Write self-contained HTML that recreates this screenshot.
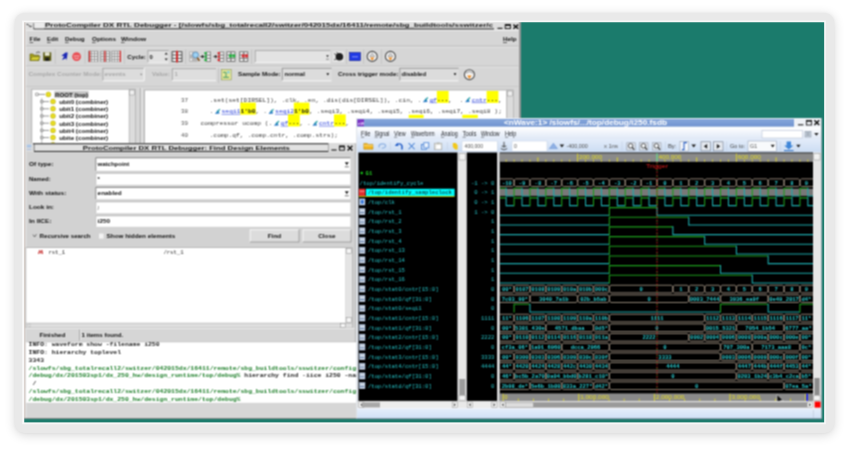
<!DOCTYPE html>
<html lang="en">
<head>
<meta charset="utf-8">
<title>ProtoCompiler DX RTL Debugger</title>
<style>
html,body{margin:0;padding:0;background:#fff;}
body{width:850px;height:453px;overflow:hidden;position:relative;font-family:"Liberation Sans",sans-serif;}
.card{position:absolute;left:15px;top:13px;width:819px;height:419.5px;background:#e9e9e9;border-radius:9px;
  box-shadow:0 2px 11px rgba(0,0,0,.16),0 0 3px rgba(0,0,0,.05);}
svg{position:absolute;left:0;top:0;}
svg text{white-space:pre;}
.s{font-family:"Liberation Sans",sans-serif;}
.m{font-family:"Liberation Mono",monospace;}
</style>
</head>
<body>
<div class="card"></div>
<svg width="850" height="453" viewBox="0 0 850 453">
<defs>
<filter id="soft" x="0" y="0" width="850" height="453" filterUnits="userSpaceOnUse" color-interpolation-filters="sRGB"><feConvolveMatrix order="3" kernelMatrix="1 2 1 2 4 2 1 2 1" divisor="16" edgeMode="duplicate"/></filter>
<clipPath id="shot"><rect x="24" y="22" width="800.2" height="400.6"/></clipPath>
<clipPath id="mainclip"><rect x="24" y="22" width="497.1" height="396.9"/></clipPath>
<clipPath id="waveclip"><rect x="499.7" y="152.5" width="313.3" height="248.5"/></clipPath>
<linearGradient id="gmenu" x1="0" y1="0" x2="0" y2="1"><stop offset="0" stop-color="#ffffff"/><stop offset="1" stop-color="#dfe8f6"/></linearGradient>
<linearGradient id="gtool" x1="0" y1="0" x2="0" y2="1"><stop offset="0" stop-color="#e3ecf9"/><stop offset="1" stop-color="#cbdcf3"/></linearGradient>
<linearGradient id="gstat" x1="0" y1="0" x2="0" y2="1"><stop offset="0" stop-color="#e6eefa"/><stop offset="1" stop-color="#cfdff5"/></linearGradient>
<linearGradient id="gtitle" x1="0" y1="0" x2="0" y2="1"><stop offset="0" stop-color="#86a6db"/><stop offset="1" stop-color="#6f93cf"/></linearGradient>
</defs>
<rect x="22.2" y="20.6" width="803.6" height="403.6" fill="#f8f8f8"/>
<g clip-path="url(#shot)" filter="url(#soft)">
<rect x="24" y="22" width="801" height="401" fill="#1b7b6c"/>
<g clip-path="url(#mainclip)">
<rect x="24" y="22" width="497.1" height="396.9" fill="#d6d6d6"/>
<rect x="24" y="22" width="0.9" height="396.9" fill="#c2b2a6"/>
<rect x="24.9" y="22" width="1.7" height="396.9" fill="#e0e0e0"/>
<rect x="519" y="22" width="2.1" height="396.9" fill="#969696"/>
<rect x="26" y="22" width="492.4" height="8.3" fill="#dedede"/>
<path d="M26.6 24.4 q1.6 -0.4 2.4 1.2 q1 1.8 2.8 0.6" stroke="#222" fill="none" stroke-width="0.9"/>
<line x1="33.8" y1="23" x2="33.8" y2="29.2" stroke="#444" stroke-width="0.7"/>
<line x1="33.8" y1="28.9" x2="494" y2="28.9" stroke="#111" stroke-width="0.9"/>
<rect x="34.4" y="23" width="9.6" height="5.4" fill="#ececec"/>
<text class="s" x="45" y="27.1" font-size="5.7" fill="#111" textLength="448" lengthAdjust="spacingAndGlyphs" font-weight="bold">ProtoCompiler DX RTL Debugger - [/slowfs/sbg_totalrecall2/switzer/042015dx/16411/remote/sbg_buildtools/sswitzer/c</text>
<line x1="497.5" y1="28.3" x2="502.5" y2="28.3" stroke="#111" stroke-width="1.1"/>
<rect x="505.2" y="24.6" width="5.2" height="4" fill="none" stroke="#111" stroke-width="0.9"/>
<line x1="505.2" y1="25.2" x2="510.4" y2="25.2" stroke="#111" stroke-width="1.4"/>
<path d="M513.4 24.6 L518.2 28.8 M518.2 24.6 L513.4 28.8" stroke="#111" fill="none" stroke-width="1.4"/>
<line x1="26" y1="30.6" x2="518.4" y2="30.6" stroke="#f6f6f6" stroke-width="0.7"/>
<text class="s" x="29.6" y="41.3" font-size="6.07" fill="#111" textLength="10.9" lengthAdjust="spacingAndGlyphs" font-weight="bold">File</text>
<line x1="29.6" y1="42.6" x2="33.2" y2="42.6" stroke="#111" stroke-width="0.6"/>
<text class="s" x="47" y="41.3" font-size="6.07" fill="#111" textLength="11.2" lengthAdjust="spacingAndGlyphs" font-weight="bold">Edit</text>
<line x1="47" y1="42.6" x2="50.6" y2="42.6" stroke="#111" stroke-width="0.6"/>
<text class="s" x="65" y="41.3" font-size="6.07" fill="#111" textLength="19.6" lengthAdjust="spacingAndGlyphs" font-weight="bold">Debug</text>
<line x1="65" y1="42.6" x2="68.6" y2="42.6" stroke="#111" stroke-width="0.6"/>
<text class="s" x="92" y="41.3" font-size="6.07" fill="#111" textLength="24" lengthAdjust="spacingAndGlyphs" font-weight="bold">Options</text>
<line x1="92" y1="42.6" x2="95.6" y2="42.6" stroke="#111" stroke-width="0.6"/>
<text class="s" x="121" y="41.3" font-size="6.07" fill="#111" textLength="25" lengthAdjust="spacingAndGlyphs" font-weight="bold">Window</text>
<line x1="121" y1="42.6" x2="124.6" y2="42.6" stroke="#111" stroke-width="0.6"/>
<text class="s" x="503" y="41.3" font-size="6.07" fill="#111" textLength="13.5" lengthAdjust="spacingAndGlyphs" font-weight="bold">Help</text>
<line x1="503" y1="42.6" x2="507" y2="42.6" stroke="#111" stroke-width="0.6"/>
<line x1="26" y1="46.2" x2="518.4" y2="46.2" stroke="#a8a8a8" stroke-width="0.8"/>
<line x1="26" y1="47" x2="518.4" y2="47" stroke="#f0f0f0" stroke-width="0.7"/>
<path d="M30 60.5 V54 h3 l1 1.2 h5 V60.5 Z" stroke="#5a5710" fill="#a8a21c" stroke-width="0.6"/>
<path d="M30 60.5 l2.2 -4 h8 l-2 4 Z" stroke="#5a5710" fill="#d0ca34" stroke-width="0.5"/>
<path d="M36 53 q2 -2 4 -0.5" stroke="#333" fill="none" stroke-width="0.7"/>
<rect x="43.2" y="52.3" width="8" height="8.5" fill="#5b5a12"/>
<rect x="44.8" y="52.3" width="4.8" height="3.5" fill="#e9e9d8"/>
<rect x="45.2" y="57.6" width="4" height="3.2" fill="#1c1c1c"/>
<line x1="55.3" y1="49.5" x2="55.3" y2="64" stroke="#bdbdbd" stroke-width="0.7"/>
<path d="M65.6 52.6 l-4.2 3.2 2.8 0.5 -2.3 3.7 4.2 -1.8 0.5 2.3 1.1 -7.9 Z" stroke="none" fill="#1c28b4" stroke-width="1"/>
<circle cx="76.6" cy="56.6" r="4.4" fill="#e84a50" stroke="none" stroke-width="1"/>
<path d="M73.6 56 h6 M74.4 58 q2.2 1.6 4.4 0" stroke="#f7d0d0" fill="none" stroke-width="0.9"/>
<line x1="85" y1="49.5" x2="85" y2="64" stroke="#bdbdbd" stroke-width="0.7"/>
<rect x="88.2" y="50.8" width="10" height="11.2" fill="#8c8c8c"/>
<rect x="89.1" y="51.6" width="2.23" height="1.8" fill="#f6f6f6"/>
<rect x="92.03" y="51.6" width="2.23" height="1.8" fill="#f6f6f6"/>
<rect x="94.97" y="51.6" width="2.23" height="1.8" fill="#f6f6f6"/>
<rect x="89.1" y="54.3" width="2.23" height="1.8" fill="#f6f6f6"/>
<rect x="92.03" y="54.3" width="2.23" height="1.8" fill="#f6f6f6"/>
<rect x="94.97" y="54.3" width="2.23" height="1.8" fill="#f6f6f6"/>
<rect x="89.1" y="57" width="2.23" height="1.8" fill="#f6f6f6"/>
<rect x="92.03" y="57" width="2.23" height="1.8" fill="#f6f6f6"/>
<rect x="94.97" y="57" width="2.23" height="1.8" fill="#f6f6f6"/>
<rect x="89.1" y="59.7" width="2.23" height="1.8" fill="#f6f6f6"/>
<rect x="92.03" y="59.7" width="2.23" height="1.8" fill="#f6f6f6"/>
<rect x="94.97" y="59.7" width="2.23" height="1.8" fill="#f6f6f6"/>
<line x1="89.6" y1="50.8" x2="89.6" y2="62" stroke="#d62828" stroke-width="1.3"/>
<rect x="100.4" y="50.8" width="9.6" height="11.2" fill="#8c8c8c"/>
<rect x="101.3" y="51.6" width="2.1" height="1.8" fill="#f6f6f6"/>
<rect x="104.1" y="51.6" width="2.1" height="1.8" fill="#f6f6f6"/>
<rect x="106.9" y="51.6" width="2.1" height="1.8" fill="#f6f6f6"/>
<rect x="101.3" y="54.3" width="2.1" height="1.8" fill="#f6f6f6"/>
<rect x="104.1" y="54.3" width="2.1" height="1.8" fill="#f6f6f6"/>
<rect x="106.9" y="54.3" width="2.1" height="1.8" fill="#f6f6f6"/>
<rect x="101.3" y="57" width="2.1" height="1.8" fill="#f6f6f6"/>
<rect x="104.1" y="57" width="2.1" height="1.8" fill="#f6f6f6"/>
<rect x="106.9" y="57" width="2.1" height="1.8" fill="#f6f6f6"/>
<rect x="101.3" y="59.7" width="2.1" height="1.8" fill="#f6f6f6"/>
<rect x="104.1" y="59.7" width="2.1" height="1.8" fill="#f6f6f6"/>
<rect x="106.9" y="59.7" width="2.1" height="1.8" fill="#f6f6f6"/>
<line x1="104.9" y1="50.8" x2="104.9" y2="62" stroke="#d62828" stroke-width="1.3"/>
<rect x="111.4" y="50.8" width="9.6" height="11.2" fill="#8c8c8c"/>
<rect x="112.3" y="51.6" width="2.1" height="1.8" fill="#f6f6f6"/>
<rect x="115.1" y="51.6" width="2.1" height="1.8" fill="#f6f6f6"/>
<rect x="117.9" y="51.6" width="2.1" height="1.8" fill="#f6f6f6"/>
<rect x="112.3" y="54.3" width="2.1" height="1.8" fill="#f6f6f6"/>
<rect x="115.1" y="54.3" width="2.1" height="1.8" fill="#f6f6f6"/>
<rect x="117.9" y="54.3" width="2.1" height="1.8" fill="#f6f6f6"/>
<rect x="112.3" y="57" width="2.1" height="1.8" fill="#f6f6f6"/>
<rect x="115.1" y="57" width="2.1" height="1.8" fill="#f6f6f6"/>
<rect x="117.9" y="57" width="2.1" height="1.8" fill="#f6f6f6"/>
<rect x="112.3" y="59.7" width="2.1" height="1.8" fill="#f6f6f6"/>
<rect x="115.1" y="59.7" width="2.1" height="1.8" fill="#f6f6f6"/>
<rect x="117.9" y="59.7" width="2.1" height="1.8" fill="#f6f6f6"/>
<line x1="120.3" y1="50.8" x2="120.3" y2="62" stroke="#d62828" stroke-width="1.3"/>
<line x1="124.4" y1="49.5" x2="124.4" y2="64" stroke="#bdbdbd" stroke-width="0.7"/>
<text class="s" x="127.3" y="58.6" font-size="6.07" fill="#111" textLength="18.6" lengthAdjust="spacingAndGlyphs" font-weight="bold">Cycle:</text>
<rect x="147.6" y="50.6" width="21" height="12" fill="#e2e2e2"/>
<line x1="147.6" y1="50.6" x2="168.6" y2="50.6" stroke="#9a9a9a" stroke-width="0.8"/>
<line x1="147.9" y1="50.6" x2="147.9" y2="62.6" stroke="#9a9a9a" stroke-width="0.8"/>
<line x1="147.6" y1="62.8" x2="168.6" y2="62.8" stroke="#f8f8f8" stroke-width="0.8"/>
<text class="s" x="149.6" y="58.8" font-size="5.89" fill="#111" font-weight="bold">0</text>
<path d="M164.6 54.6 l1.6 -2 1.6 2 Z M164.6 58.4 l1.6 2 1.6 -2 Z" stroke="none" fill="#222" stroke-width="1"/>
<rect x="171.6" y="51.2" width="10.8" height="10.8" fill="#4c4c4c"/>
<rect x="172.6" y="52.2" width="3.6" height="2.3" fill="#f4f4f4"/>
<rect x="177.8" y="52.2" width="3.6" height="2.3" fill="#f4f4f4"/>
<rect x="172.6" y="55.5" width="3.6" height="2.3" fill="#f4f4f4"/>
<rect x="177.8" y="55.5" width="3.6" height="2.3" fill="#f4f4f4"/>
<rect x="172.6" y="58.8" width="3.6" height="2.3" fill="#f4f4f4"/>
<rect x="177.8" y="58.8" width="3.6" height="2.3" fill="#f4f4f4"/>
<line x1="177" y1="50.8" x2="177" y2="62.4" stroke="#e02424" stroke-width="1.7"/>
<line x1="185.6" y1="49.5" x2="185.6" y2="64" stroke="#bdbdbd" stroke-width="0.7"/>
<rect x="189.2" y="51.4" width="8.4" height="10.4" fill="#b4b4b4"/>
<rect x="190.2" y="58.6" width="1.8" height="2" fill="#f4f4f4"/>
<rect x="190.2" y="52.4" width="1.8" height="2" fill="#f4f4f4"/>
<circle cx="195.6" cy="55" r="2.9" fill="#9cd2f4" stroke="#4f7fae" stroke-width="0.7"/>
<line x1="197.4" y1="57.6" x2="199.4" y2="60.8" stroke="#7a4a16" stroke-width="1.6"/>
<path d="M200.4 56.6 h3.4 M202 55.2 l1.6 1.4 -1.6 1.4" stroke="#1a1a1a" fill="none" stroke-width="1"/>
<rect x="206.2" y="51.6" width="4.8" height="10.2" fill="#7c7c7c"/>
<rect x="207" y="52.5" width="3.2" height="2" fill="#f4f4f4"/>
<rect x="207" y="55.7" width="3.2" height="2" fill="#f4f4f4"/>
<rect x="207" y="58.9" width="3.2" height="2" fill="#f4f4f4"/>
<line x1="205.6" y1="52" x2="205.6" y2="61.4" stroke="#5a5a5a" stroke-width="0.7"/>
<rect x="204.4" y="52.1" width="2.4" height="2.2" fill="#1eb43c"/>
<rect x="204.4" y="55.5" width="2.4" height="2.2" fill="#1eb43c"/>
<rect x="204.4" y="58.9" width="2.4" height="2.2" fill="#1eb43c"/>
<path d="M213.6 56.6 h3.4 M215.2 55.2 l1.6 1.4 -1.6 1.4" stroke="#1a1a1a" fill="none" stroke-width="1"/>
<rect x="219.4" y="51.6" width="4.8" height="10.2" fill="#7c7c7c"/>
<rect x="220.2" y="52.5" width="3.2" height="2" fill="#f4f4f4"/>
<rect x="220.2" y="55.7" width="3.2" height="2" fill="#f4f4f4"/>
<rect x="220.2" y="58.9" width="3.2" height="2" fill="#f4f4f4"/>
<line x1="218.8" y1="52" x2="218.8" y2="61.4" stroke="#5a5a5a" stroke-width="0.7"/>
<rect x="217.6" y="52.1" width="2.4" height="2.2" fill="#dc2c30"/>
<rect x="217.6" y="55.5" width="2.4" height="2.2" fill="#dc2c30"/>
<rect x="217.6" y="58.9" width="2.4" height="2.2" fill="#dc2c30"/>
<rect x="226.4" y="51.4" width="9" height="10.4" fill="#6c6c6c"/>
<rect x="227.3" y="52.3" width="3" height="2.2" fill="#f2f2f2"/>
<rect x="231.5" y="52.3" width="3" height="2.2" fill="#f2f2f2"/>
<rect x="227.3" y="55.5" width="3" height="2.2" fill="#f2f2f2"/>
<rect x="231.5" y="55.5" width="3" height="2.2" fill="#f2f2f2"/>
<rect x="227.3" y="58.7" width="3" height="2.2" fill="#f2f2f2"/>
<rect x="231.5" y="58.7" width="3" height="2.2" fill="#f2f2f2"/>
<rect x="229" y="54.4" width="2.8" height="3" fill="#1eb43c"/>
<rect x="232.4" y="54.4" width="2.8" height="3" fill="#1eb43c"/>
<rect x="239.2" y="51.4" width="9" height="10.4" fill="#6c6c6c"/>
<rect x="240.1" y="52.3" width="3" height="2.2" fill="#f2f2f2"/>
<rect x="244.3" y="52.3" width="3" height="2.2" fill="#f2f2f2"/>
<rect x="240.1" y="55.5" width="3" height="2.2" fill="#f2f2f2"/>
<rect x="244.3" y="55.5" width="3" height="2.2" fill="#f2f2f2"/>
<rect x="240.1" y="58.7" width="3" height="2.2" fill="#f2f2f2"/>
<rect x="244.3" y="58.7" width="3" height="2.2" fill="#f2f2f2"/>
<rect x="241.8" y="54.4" width="2.8" height="3" fill="#dc2c30"/>
<rect x="245.2" y="54.4" width="2.8" height="3" fill="#dc2c30"/>
<line x1="251.6" y1="49.5" x2="251.6" y2="64" stroke="#bdbdbd" stroke-width="0.7"/>
<rect x="255" y="50.4" width="75.4" height="12" fill="#e3e3e3"/>
<line x1="255" y1="50.6" x2="330.4" y2="50.6" stroke="#a0a0a0" stroke-width="0.8"/>
<line x1="255.3" y1="50.4" x2="255.3" y2="62.4" stroke="#a0a0a0" stroke-width="0.8"/>
<line x1="255" y1="62.6" x2="330.4" y2="62.6" stroke="#f8f8f8" stroke-width="0.9"/>
<path d="M326.2 55.2 h2.6 l-1.3 2 Z" stroke="none" fill="#222" stroke-width="1"/>
<line x1="326" y1="59.2" x2="329" y2="59.2" stroke="#555" stroke-width="0.6"/>
<rect x="332.6" y="51.4" width="11.4" height="10.6" fill="#e6e6e6"/>
<circle cx="339.4" cy="56.8" r="3.8" fill="#1e1e1e" stroke="none" stroke-width="1"/>
<path d="M334 53.5 l3 2 M334 60 l3 -1.5 M336.5 52 l1.6 2" stroke="#333" fill="none" stroke-width="0.8"/>
<line x1="346.6" y1="49.5" x2="346.6" y2="64" stroke="#bdbdbd" stroke-width="0.7"/>
<rect x="349.6" y="52.6" width="10.8" height="8" fill="#1f38e4" stroke="#0e1a8a" stroke-width="0.6"/>
<line x1="352" y1="56.8" x2="358" y2="56.8" stroke="#aab6ff" stroke-width="0.8"/>
<line x1="363.6" y1="49.5" x2="363.6" y2="64" stroke="#bdbdbd" stroke-width="0.7"/>
<circle cx="372.2" cy="56.4" r="5" fill="#f4f4f4" stroke="#4a4a4a" stroke-width="1.1"/>
<path d="M372.2 53 l2.6 3.4 h-5.2 Z" stroke="#777" fill="#d8d8d8" stroke-width="0.5"/>
<path d="M370 57.4 h4.4 l-2.2 3.2 Z" stroke="none" fill="#f08a1c" stroke-width="1"/>
<circle cx="390.4" cy="56.4" r="5" fill="#f4f4f4" stroke="#4a4a4a" stroke-width="1.1"/>
<path d="M390.4 53 l2.6 3.4 h-5.2 Z" stroke="#777" fill="#d8d8d8" stroke-width="0.5"/>
<path d="M388.2 57.4 h4.4 l-2.2 3.2 Z" stroke="none" fill="#f08a1c" stroke-width="1"/>
<line x1="381.4" y1="49.5" x2="381.4" y2="64" stroke="#bdbdbd" stroke-width="0.7"/>
<line x1="26" y1="66.2" x2="518.4" y2="66.2" stroke="#b4b4b4" stroke-width="0.8"/>
<line x1="26" y1="67" x2="518.4" y2="67" stroke="#efefef" stroke-width="0.7"/>
<g transform="translate(0 -0.9)">
<text class="s" x="28.5" y="77" font-size="5.98" fill="#a9a9a9" textLength="73.5" lengthAdjust="spacingAndGlyphs" font-weight="bold">Complex Counter Mode:</text>
<rect x="102.6" y="69" width="41.4" height="12.6" fill="#dcdcdc"/>
<line x1="102.6" y1="69.2" x2="144" y2="69.2" stroke="#9c9c9c" stroke-width="0.8"/>
<line x1="102.9" y1="69" x2="102.9" y2="81.6" stroke="#9c9c9c" stroke-width="0.8"/>
<line x1="102.6" y1="81.8" x2="144" y2="81.8" stroke="#fafafa" stroke-width="0.9"/>
<line x1="144.2" y1="69" x2="144.2" y2="81.8" stroke="#fafafa" stroke-width="0.9"/>
<text class="s" x="104.6" y="77" font-size="5.89" fill="#a9a9a9" textLength="21" lengthAdjust="spacingAndGlyphs" font-weight="bold">events</text>
<path d="M140 74.6 h2.4 l-1.2 1.8 Z" stroke="none" fill="#888" stroke-width="1"/>
<text class="s" x="152" y="77" font-size="5.98" fill="#a9a9a9" textLength="18" lengthAdjust="spacingAndGlyphs" font-weight="bold">Value:</text>
<rect x="172" y="69.4" width="44" height="12" fill="#dedede"/>
<line x1="172" y1="69.6" x2="216" y2="69.6" stroke="#9c9c9c" stroke-width="0.8"/>
<line x1="172.3" y1="69.4" x2="172.3" y2="81.4" stroke="#9c9c9c" stroke-width="0.8"/>
<line x1="172" y1="81.6" x2="216" y2="81.6" stroke="#fafafa" stroke-width="0.9"/>
<text class="s" x="174.4" y="77" font-size="5.89" fill="#a9a9a9" font-weight="bold">1</text>
<line x1="218.6" y1="68.6" x2="218.6" y2="84" stroke="#bdbdbd" stroke-width="0.7"/>
<rect x="221.4" y="70.4" width="9.8" height="10.4" fill="#e4e696" stroke="#8f9a62" stroke-width="0.6"/>
<path d="M223 73.2 h3 v5 h3 M223 78.2 h3" stroke="#4a9a6a" fill="none" stroke-width="1"/>
<rect x="227" y="71.8" width="2.8" height="2.6" fill="#8fd0d0"/>
<text class="s" x="238" y="77" font-size="5.98" fill="#111" textLength="42.6" lengthAdjust="spacingAndGlyphs" font-weight="bold">Sample Mode:</text>
<rect x="282" y="69" width="49.6" height="12.6" fill="#dcdcdc"/>
<line x1="282" y1="69.2" x2="331.6" y2="69.2" stroke="#8c8c8c" stroke-width="0.8"/>
<line x1="282.3" y1="69" x2="282.3" y2="81.6" stroke="#8c8c8c" stroke-width="0.8"/>
<line x1="282" y1="81.8" x2="331.6" y2="81.8" stroke="#fafafa" stroke-width="0.9"/>
<text class="s" x="284.4" y="77" font-size="5.89" fill="#111" textLength="20.6" lengthAdjust="spacingAndGlyphs" font-weight="bold">normal</text>
<path d="M326.4 74.2 h2.8 l-1.4 2.2 Z" stroke="none" fill="#111" stroke-width="1"/>
<text class="s" x="338" y="77" font-size="5.98" fill="#111" textLength="60.6" lengthAdjust="spacingAndGlyphs" font-weight="bold">Cross trigger mode:</text>
<rect x="399.6" y="69" width="59" height="12.6" fill="#dcdcdc"/>
<line x1="399.6" y1="69.2" x2="458.6" y2="69.2" stroke="#8c8c8c" stroke-width="0.8"/>
<line x1="399.9" y1="69" x2="399.9" y2="81.6" stroke="#8c8c8c" stroke-width="0.8"/>
<line x1="399.6" y1="81.8" x2="458.6" y2="81.8" stroke="#fafafa" stroke-width="0.9"/>
<text class="s" x="401.6" y="77" font-size="5.89" fill="#111" textLength="24.6" lengthAdjust="spacingAndGlyphs" font-weight="bold">disabled</text>
<path d="M453.6 74.2 h2.8 l-1.4 2.2 Z" stroke="none" fill="#111" stroke-width="1"/>
<circle cx="469.4" cy="75.6" r="5" fill="#f4f4f4" stroke="#4a4a4a" stroke-width="1.1"/>
<path d="M466 74 q3.4 -3 6.8 0" stroke="#777" fill="none" stroke-width="0.7"/>
<path d="M467.2 76.4 h4.4 l-2.2 3.4 Z" stroke="none" fill="#f08a1c" stroke-width="1"/>
</g>
<line x1="26" y1="86.4" x2="518.4" y2="86.4" stroke="#c4c4c4" stroke-width="0.7"/>
<rect x="31.4" y="88.8" width="104.4" height="54.7" fill="#a9a9a9"/>
<rect x="32.2" y="89.6" width="96.8" height="53.9" fill="#ffffff"/>
<rect x="129" y="89.6" width="6.2" height="53.9" fill="#dcdcdc"/>
<rect x="129.6" y="90" width="5" height="5" fill="#efefef" stroke="#8c8c8c" stroke-width="0.5"/>
<line x1="129.2" y1="89.6" x2="129.2" y2="143.5" stroke="#a4a4a4" stroke-width="0.6"/>
<rect x="54.4" y="91" width="34.2" height="6.8" fill="#c6c6c6"/>
<path d="M35.6 93.1 h2.6 v2.6 h-2.6 Z" stroke="#555" fill="none" stroke-width="0.5"/>
<line x1="38.2" y1="94.4" x2="45" y2="94.4" stroke="#555" stroke-width="0.6"/>
<circle cx="48.4" cy="94.4" r="2.5" fill="#e6dc22" stroke="#a89c10" stroke-width="0.4"/>
<text class="s" x="55" y="96.7" font-size="5.89" fill="#111" textLength="33" lengthAdjust="spacingAndGlyphs" font-weight="bold">ROOT (top)</text>
<path d="M40.6 100.4 h2.4 v2.4 h-2.4 Z" stroke="#555" fill="none" stroke-width="0.5"/>
<line x1="43" y1="101.6" x2="49" y2="101.6" stroke="#555" stroke-width="0.6"/>
<circle cx="53" cy="101.6" r="2.5" fill="#e6dc22" stroke="#a89c10" stroke-width="0.4"/>
<text class="s" x="59.2" y="103.9" font-size="5.7" fill="#111" textLength="49" lengthAdjust="spacingAndGlyphs" font-weight="bold">ubit0 (combiner)</text>
<path d="M40.6 107.6 h2.4 v2.4 h-2.4 Z" stroke="#555" fill="none" stroke-width="0.5"/>
<line x1="43" y1="108.8" x2="49" y2="108.8" stroke="#555" stroke-width="0.6"/>
<circle cx="53" cy="108.8" r="2.5" fill="#e6dc22" stroke="#a89c10" stroke-width="0.4"/>
<text class="s" x="59.2" y="111.1" font-size="5.7" fill="#111" textLength="49" lengthAdjust="spacingAndGlyphs" font-weight="bold">ubit1 (combiner)</text>
<path d="M40.6 114.8 h2.4 v2.4 h-2.4 Z" stroke="#555" fill="none" stroke-width="0.5"/>
<line x1="43" y1="116" x2="49" y2="116" stroke="#555" stroke-width="0.6"/>
<circle cx="53" cy="116" r="2.5" fill="#e6dc22" stroke="#a89c10" stroke-width="0.4"/>
<text class="s" x="59.2" y="118.3" font-size="5.7" fill="#111" textLength="49" lengthAdjust="spacingAndGlyphs" font-weight="bold">ubit2 (combiner)</text>
<path d="M40.6 122 h2.4 v2.4 h-2.4 Z" stroke="#555" fill="none" stroke-width="0.5"/>
<line x1="43" y1="123.2" x2="49" y2="123.2" stroke="#555" stroke-width="0.6"/>
<circle cx="53" cy="123.2" r="2.5" fill="#e6dc22" stroke="#a89c10" stroke-width="0.4"/>
<text class="s" x="59.2" y="125.5" font-size="5.7" fill="#111" textLength="49" lengthAdjust="spacingAndGlyphs" font-weight="bold">ubit3 (combiner)</text>
<path d="M40.6 129.2 h2.4 v2.4 h-2.4 Z" stroke="#555" fill="none" stroke-width="0.5"/>
<line x1="43" y1="130.4" x2="49" y2="130.4" stroke="#555" stroke-width="0.6"/>
<circle cx="53" cy="130.4" r="2.5" fill="#e6dc22" stroke="#a89c10" stroke-width="0.4"/>
<text class="s" x="59.2" y="132.7" font-size="5.7" fill="#111" textLength="49" lengthAdjust="spacingAndGlyphs" font-weight="bold">ubit4 (combiner)</text>
<path d="M40.6 136.4 h2.4 v2.4 h-2.4 Z" stroke="#555" fill="none" stroke-width="0.5"/>
<line x1="43" y1="137.6" x2="49" y2="137.6" stroke="#555" stroke-width="0.6"/>
<circle cx="53" cy="137.6" r="2.5" fill="#e6dc22" stroke="#a89c10" stroke-width="0.4"/>
<text class="s" x="59.2" y="139.9" font-size="5.7" fill="#111" textLength="49" lengthAdjust="spacingAndGlyphs" font-weight="bold">ubite (combiner)</text>
<path d="M40.6 143.6 h2.4 v2.4 h-2.4 Z" stroke="#555" fill="none" stroke-width="0.5"/>
<line x1="43" y1="144.8" x2="49" y2="144.8" stroke="#555" stroke-width="0.6"/>
<circle cx="53" cy="144.8" r="2.5" fill="#e6dc22" stroke="#a89c10" stroke-width="0.4"/>
<text class="s" x="59.2" y="147.1" font-size="5.7" fill="#111" textLength="49" lengthAdjust="spacingAndGlyphs" font-weight="bold">ubitd (combiner)</text>
<line x1="41.8" y1="98" x2="41.8" y2="143.5" stroke="#777" stroke-width="0.5"/>
<line x1="140.4" y1="88" x2="140.4" y2="143.5" stroke="#a2a2a2" stroke-width="0.9"/>
<line x1="141.4" y1="88" x2="141.4" y2="143.5" stroke="#f2f2f2" stroke-width="0.8"/>
<rect x="144.2" y="89.6" width="369.4" height="53.9" fill="#a9a9a9"/>
<rect x="145" y="90.4" width="361.6" height="53.1" fill="#ffffff"/>
<rect x="506.6" y="90.4" width="6.4" height="53.1" fill="#dcdcdc"/>
<line x1="506.8" y1="90.4" x2="506.8" y2="143.5" stroke="#a4a4a4" stroke-width="0.6"/>
<rect x="507.4" y="91" width="5" height="5" fill="#efefef" stroke="#8c8c8c" stroke-width="0.5"/>
<text class="m" x="188" y="101.7" font-size="5.9" fill="#555" text-anchor="end">37</text>
<text class="m" x="209.6" y="101.7" font-size="5.8" fill="#3a3a3a" textLength="211.68" lengthAdjust="spacingAndGlyphs">.set(set[DIRSEL]), .clk, .en, .dis(dis[DIRSEL]), .cin, .</text>
<path d="M422.88 102.3 l3.2 -4.4 1.4 4 Z" stroke="none" fill="#2a78c8" stroke-width="1"/>
<path d="M424.88 100.7 l3 -3.2" stroke="#2aa3a3" fill="none" stroke-width="1.1"/>
<text class="m" x="429.48" y="101.7" font-size="5.8" fill="#2038d8" textLength="7.56" lengthAdjust="spacingAndGlyphs">qf</text>
<line x1="429.48" y1="102.7" x2="437.04" y2="102.7" stroke="#2038d8" stroke-width="0.5"/>
<rect x="436.84" y="90.9" width="11.74" height="12" fill="#ffff00"/>
<text class="m" x="437.04" y="101.7" font-size="5.8" fill="#222" textLength="11.34" lengthAdjust="spacingAndGlyphs" font-weight="bold">···</text>
<text class="m" x="448.38" y="101.7" font-size="5.8" fill="#3a3a3a" textLength="15.12" lengthAdjust="spacingAndGlyphs">,  .</text>
<path d="M465.1 102.3 l3.2 -4.4 1.4 4 Z" stroke="none" fill="#2a78c8" stroke-width="1"/>
<path d="M467.1 100.7 l3 -3.2" stroke="#2aa3a3" fill="none" stroke-width="1.1"/>
<text class="m" x="471.7" y="101.7" font-size="5.8" fill="#2038d8" textLength="15.12" lengthAdjust="spacingAndGlyphs">cntr</text>
<line x1="471.7" y1="102.7" x2="486.82" y2="102.7" stroke="#2038d8" stroke-width="0.5"/>
<rect x="486.62" y="90.9" width="11.74" height="12" fill="#ffff00"/>
<text class="m" x="486.82" y="101.7" font-size="5.8" fill="#222" textLength="11.34" lengthAdjust="spacingAndGlyphs" font-weight="bold">···</text>
<text class="m" x="498.16" y="101.7" font-size="5.8" fill="#3a3a3a" textLength="3.78" lengthAdjust="spacingAndGlyphs">,</text>
<text class="m" x="188" y="113.4" font-size="5.9" fill="#555" text-anchor="end">38</text>
<text class="m" x="209.6" y="113.4" font-size="5.8" fill="#3a3a3a" textLength="3.78" lengthAdjust="spacingAndGlyphs">.</text>
<path d="M214.98 114 l3.2 -4.4 1.4 4 Z" stroke="none" fill="#2a78c8" stroke-width="1"/>
<path d="M216.98 112.4 l3 -3.2" stroke="#2aa3a3" fill="none" stroke-width="1.1"/>
<text class="m" x="221.58" y="113.4" font-size="5.8" fill="#2038d8" textLength="18.9" lengthAdjust="spacingAndGlyphs">seqi1</text>
<line x1="221.58" y1="114.4" x2="240.48" y2="114.4" stroke="#2038d8" stroke-width="0.5"/>
<rect x="240.28" y="102.6" width="15.52" height="12" fill="#ffff00"/>
<text class="m" x="240.48" y="113.4" font-size="5.8" fill="#222" textLength="15.12" lengthAdjust="spacingAndGlyphs" font-weight="bold">1&#x27;b0</text>
<text class="m" x="255.6" y="113.4" font-size="5.8" fill="#3a3a3a" textLength="11.34" lengthAdjust="spacingAndGlyphs">, .</text>
<path d="M268.54 114 l3.2 -4.4 1.4 4 Z" stroke="none" fill="#2a78c8" stroke-width="1"/>
<path d="M270.54 112.4 l3 -3.2" stroke="#2aa3a3" fill="none" stroke-width="1.1"/>
<text class="m" x="275.14" y="113.4" font-size="5.8" fill="#2038d8" textLength="18.9" lengthAdjust="spacingAndGlyphs">seqi2</text>
<line x1="275.14" y1="114.4" x2="294.04" y2="114.4" stroke="#2038d8" stroke-width="0.5"/>
<rect x="293.84" y="102.6" width="15.52" height="12" fill="#ffff00"/>
<text class="m" x="294.04" y="113.4" font-size="5.8" fill="#222" textLength="15.12" lengthAdjust="spacingAndGlyphs" font-weight="bold">1&#x27;b0</text>
<text class="m" x="309.16" y="113.4" font-size="5.8" fill="#3a3a3a" textLength="192.78" lengthAdjust="spacingAndGlyphs">, .seqi3, .seqi4, .seqi5, .seqi6, .seqi7, .seqi8 );</text>
<text class="m" x="188" y="125.2" font-size="5.9" fill="#555" text-anchor="end">39</text>
<text class="m" x="200.6" y="125.2" font-size="5.8" fill="#3a3a3a" textLength="71.82" lengthAdjust="spacingAndGlyphs">compressor ucomp (.</text>
<path d="M274.02 125.8 l3.2 -4.4 1.4 4 Z" stroke="none" fill="#2a78c8" stroke-width="1"/>
<path d="M276.02 124.2 l3 -3.2" stroke="#2aa3a3" fill="none" stroke-width="1.1"/>
<text class="m" x="280.62" y="125.2" font-size="5.8" fill="#2038d8" textLength="7.56" lengthAdjust="spacingAndGlyphs">qf</text>
<line x1="280.62" y1="126.2" x2="288.18" y2="126.2" stroke="#2038d8" stroke-width="0.5"/>
<rect x="287.98" y="114.4" width="11.74" height="12" fill="#ffff00"/>
<text class="m" x="288.18" y="125.2" font-size="5.8" fill="#222" textLength="11.34" lengthAdjust="spacingAndGlyphs" font-weight="bold">···</text>
<text class="m" x="299.52" y="125.2" font-size="5.8" fill="#3a3a3a" textLength="11.34" lengthAdjust="spacingAndGlyphs">, .</text>
<path d="M312.46 125.8 l3.2 -4.4 1.4 4 Z" stroke="none" fill="#2a78c8" stroke-width="1"/>
<path d="M314.46 124.2 l3 -3.2" stroke="#2aa3a3" fill="none" stroke-width="1.1"/>
<text class="m" x="319.06" y="125.2" font-size="5.8" fill="#2038d8" textLength="15.12" lengthAdjust="spacingAndGlyphs">cntr</text>
<line x1="319.06" y1="126.2" x2="334.18" y2="126.2" stroke="#2038d8" stroke-width="0.5"/>
<rect x="333.98" y="114.4" width="11.74" height="12" fill="#ffff00"/>
<text class="m" x="334.18" y="125.2" font-size="5.8" fill="#222" textLength="11.34" lengthAdjust="spacingAndGlyphs" font-weight="bold">···</text>
<text class="m" x="345.52" y="125.2" font-size="5.8" fill="#3a3a3a" textLength="3.78" lengthAdjust="spacingAndGlyphs">,</text>
<text class="m" x="188" y="136.7" font-size="5.9" fill="#555" text-anchor="end">40</text>
<text class="m" x="209.6" y="136.7" font-size="5.8" fill="#3a3a3a" textLength="128.52" lengthAdjust="spacingAndGlyphs">.comp.qf, .comp.cntr, .comp.strs);</text>
<rect x="408.7" y="114.8" width="14.9" height="3.6" fill="#ffff00"/>
<rect x="462.3" y="114.8" width="15.5" height="3.6" fill="#ffff00"/>
<rect x="26" y="341.5" width="487.6" height="61.3" fill="#ffffff"/>
<line x1="26" y1="341.7" x2="513.6" y2="341.7" stroke="#8a8a8a" stroke-width="0.7"/>
<text class="m" x="28.6" y="346.2" font-size="5.8" fill="#222" textLength="130.97" lengthAdjust="spacingAndGlyphs" font-weight="bold">INFO: waveform show -filename i250</text>
<text class="m" x="28.6" y="354.01" font-size="5.8" fill="#222" textLength="92.45" lengthAdjust="spacingAndGlyphs" font-weight="bold">INFO: hierarchy toplevel</text>
<text class="m" x="28.6" y="361.82" font-size="5.8" fill="#222" textLength="15.41" lengthAdjust="spacingAndGlyphs" font-weight="bold">3343</text>
<text class="m" x="28.6" y="369.63" font-size="5.8" fill="#1c7e28" textLength="327.42" lengthAdjust="spacingAndGlyphs" font-weight="bold">/slowfs/sbg_totalrecall2/switzer/042015dx/16411/remote/sbg_buildtools/sswitzer/config</text>
<text class="m" x="28.6" y="377.44" font-size="5.8" fill="#1c7e28" textLength="211.86" lengthAdjust="spacingAndGlyphs" font-weight="bold">/debug/dx/201503sp1/dx_250_hw/design_runtime/top/debug%</text>
<text class="m" x="240.46" y="377.44" font-size="5.8" fill="#222" textLength="154.08" lengthAdjust="spacingAndGlyphs" font-weight="bold"> hierarchy find -iice i250 -name * -type</text>
<text class="m" x="28.6" y="385.25" font-size="5.8" fill="#222" textLength="7.7" lengthAdjust="spacingAndGlyphs" font-weight="bold"> /</text>
<text class="m" x="28.6" y="393.06" font-size="5.8" fill="#1c7e28" textLength="327.42" lengthAdjust="spacingAndGlyphs" font-weight="bold">/slowfs/sbg_totalrecall2/switzer/042015dx/16411/remote/sbg_buildtools/sswitzer/config</text>
<text class="m" x="28.6" y="400.87" font-size="5.8" fill="#1c7e28" textLength="211.86" lengthAdjust="spacingAndGlyphs" font-weight="bold">/debug/dx/201503sp1/dx_250_hw/design_runtime/top/debug%</text>
<line x1="24" y1="418.6" x2="521.1" y2="418.6" stroke="#6a6a6a" stroke-width="0.8"/>
</g>
<rect x="24" y="143.4" width="331.6" height="198.1" fill="#d2d2d2"/>
<rect x="24" y="143.4" width="0.9" height="198.1" fill="#c2b2a6"/>
<rect x="24.9" y="143.4" width="1.5" height="198.1" fill="#e0e0e0"/>
<rect x="354.8" y="143.4" width="0.8" height="198.1" fill="#b0b0b0"/>
<rect x="26" y="143.4" width="328.6" height="8.5" fill="#dcdcdc"/>
<rect x="26.8" y="144.6" width="4.6" height="3" fill="#a9c4e6"/>
<line x1="26.8" y1="149.6" x2="31.4" y2="149.6" stroke="#9fb8dc" stroke-width="0.8"/>
<rect x="34" y="143.6" width="294.4" height="8" fill="#e2e2e2"/>
<line x1="33" y1="143.8" x2="328.4" y2="143.8" stroke="#111" stroke-width="0.9"/>
<line x1="34" y1="151.4" x2="328.4" y2="151.4" stroke="#111" stroke-width="0.9"/>
<line x1="34.2" y1="143.8" x2="34.2" y2="151.4" stroke="#444" stroke-width="0.6"/>
<line x1="328.4" y1="143.8" x2="328.4" y2="151.4" stroke="#888" stroke-width="0.6"/>
<text class="s" x="82.8" y="149.8" font-size="5.7" fill="#111" textLength="207" lengthAdjust="spacingAndGlyphs" font-weight="bold">ProtoCompiler DX RTL Debugger: Find Design Elements</text>
<line x1="331.4" y1="150" x2="336.6" y2="150" stroke="#111" stroke-width="1.1"/>
<rect x="339.4" y="146" width="5" height="4.2" fill="none" stroke="#111" stroke-width="0.9"/>
<line x1="339.4" y1="146.6" x2="344.4" y2="146.6" stroke="#111" stroke-width="1.4"/>
<path d="M347.6 145.8 L352.4 150.4 M352.4 145.8 L347.6 150.4" stroke="#111" fill="none" stroke-width="1.4"/>
<text class="s" x="29" y="166" font-size="6.07" fill="#111" textLength="24.6" lengthAdjust="spacingAndGlyphs" font-weight="bold">Of type:</text>
<rect x="95.6" y="158" width="254.8" height="12.8" fill="#ffffff"/>
<line x1="95.6" y1="157.8" x2="350.4" y2="157.8" stroke="#7d7d7d" stroke-width="0.9"/>
<line x1="95.8" y1="158" x2="95.8" y2="170.8" stroke="#7d7d7d" stroke-width="0.9"/>
<path d="M344.8 162.2 h4 l-2 3 Z" stroke="none" fill="#222" stroke-width="1"/>
<line x1="344.8" y1="166.8" x2="348.8" y2="166.8" stroke="#555" stroke-width="0.8"/>
<text class="s" x="97.6" y="166.3" font-size="5.8" fill="#111" textLength="31.6" lengthAdjust="spacingAndGlyphs" font-weight="bold">watchpoint</text>
<text class="s" x="29" y="180.7" font-size="6.07" fill="#111" textLength="21.6" lengthAdjust="spacingAndGlyphs" font-weight="bold">Named:</text>
<rect x="95.6" y="173.4" width="254.8" height="11.4" fill="#ffffff"/>
<line x1="95.6" y1="173.2" x2="350.4" y2="173.2" stroke="#b0b0b0" stroke-width="0.7"/>
<line x1="95.8" y1="173.4" x2="95.8" y2="184.8" stroke="#b0b0b0" stroke-width="0.7"/>
<text class="s" x="97.6" y="181" font-size="5.8" fill="#111" font-weight="bold">*</text>
<text class="s" x="29" y="195" font-size="6.07" fill="#111" textLength="37.4" lengthAdjust="spacingAndGlyphs" font-weight="bold">With status:</text>
<rect x="95.6" y="187.6" width="254.8" height="11.6" fill="#ffffff"/>
<line x1="95.6" y1="187.4" x2="350.4" y2="187.4" stroke="#7d7d7d" stroke-width="0.9"/>
<line x1="95.8" y1="187.6" x2="95.8" y2="199.2" stroke="#7d7d7d" stroke-width="0.9"/>
<path d="M344.8 191.2 h4 l-2 3 Z" stroke="none" fill="#222" stroke-width="1"/>
<line x1="344.8" y1="195.8" x2="348.8" y2="195.8" stroke="#555" stroke-width="0.8"/>
<text class="s" x="97.6" y="195.3" font-size="5.8" fill="#111" textLength="24" lengthAdjust="spacingAndGlyphs" font-weight="bold">enabled</text>
<text class="s" x="29" y="209.2" font-size="6.07" fill="#111" textLength="25" lengthAdjust="spacingAndGlyphs" font-weight="bold">Look in:</text>
<rect x="95.6" y="202" width="254.8" height="11.2" fill="#ffffff"/>
<line x1="95.6" y1="201.8" x2="350.4" y2="201.8" stroke="#b0b0b0" stroke-width="0.7"/>
<line x1="95.8" y1="202" x2="95.8" y2="213.2" stroke="#b0b0b0" stroke-width="0.7"/>
<text class="s" x="97.6" y="209.5" font-size="5.8" fill="#8a8a8a" font-weight="bold">/</text>
<text class="s" x="29" y="223" font-size="6.07" fill="#111" textLength="22.6" lengthAdjust="spacingAndGlyphs" font-weight="bold">In IICE:</text>
<rect x="95.6" y="216" width="254.8" height="10.8" fill="#ffffff"/>
<line x1="95.6" y1="215.8" x2="350.4" y2="215.8" stroke="#b0b0b0" stroke-width="0.7"/>
<line x1="95.8" y1="216" x2="95.8" y2="226.8" stroke="#b0b0b0" stroke-width="0.7"/>
<text class="s" x="97.6" y="223.3" font-size="5.8" fill="#111" textLength="12.6" lengthAdjust="spacingAndGlyphs" font-weight="bold">i250</text>
<path d="M33 234.6 l1.6 2.4 1.8 -2.8" stroke="#555" fill="none" stroke-width="0.8"/>
<text class="s" x="39.6" y="238.4" font-size="5.98" fill="#111" textLength="51" lengthAdjust="spacingAndGlyphs" font-weight="bold">Recursive search</text>
<rect x="99" y="233.6" width="4.6" height="5" fill="#f4f4f4"/>
<text class="s" x="106.6" y="238.4" font-size="5.98" fill="#111" textLength="68.6" lengthAdjust="spacingAndGlyphs" font-weight="bold">Show hidden elements</text>
<rect x="250" y="229.6" width="49" height="12.4" fill="#dcdcdc"/>
<line x1="250" y1="229.8" x2="299" y2="229.8" stroke="#f8f8f8" stroke-width="0.9"/>
<line x1="250.2" y1="229.6" x2="250.2" y2="242" stroke="#f8f8f8" stroke-width="0.9"/>
<line x1="250" y1="242" x2="299" y2="242" stroke="#9a9a9a" stroke-width="0.9"/>
<line x1="299" y1="229.6" x2="299" y2="242.2" stroke="#9a9a9a" stroke-width="0.9"/>
<text class="s" x="274.5" y="238.2" font-size="5.98" fill="#111" text-anchor="middle" textLength="13.6" lengthAdjust="spacingAndGlyphs" font-weight="bold">Find</text>
<rect x="302.8" y="229.6" width="48.2" height="12.4" fill="#dcdcdc"/>
<line x1="302.8" y1="229.8" x2="351" y2="229.8" stroke="#f8f8f8" stroke-width="0.9"/>
<line x1="303" y1="229.6" x2="303" y2="242" stroke="#f8f8f8" stroke-width="0.9"/>
<line x1="302.8" y1="242" x2="351" y2="242" stroke="#9a9a9a" stroke-width="0.9"/>
<line x1="351" y1="229.6" x2="351" y2="242.2" stroke="#9a9a9a" stroke-width="0.9"/>
<text class="s" x="326.9" y="238.2" font-size="5.98" fill="#111" text-anchor="middle" textLength="17.4" lengthAdjust="spacingAndGlyphs" font-weight="bold">Close</text>
<rect x="25.6" y="247.4" width="327" height="80.6" fill="#a9a9a9"/>
<rect x="26.2" y="248" width="319.4" height="75" fill="#ffffff"/>
<rect x="345.6" y="248" width="6.4" height="75" fill="#e4e4e4"/>
<rect x="346.2" y="248.6" width="5.2" height="5" fill="#f4f4f4" stroke="#8c8c8c" stroke-width="0.5"/>
<rect x="26.2" y="323" width="325.8" height="4.6" fill="#dedede"/>
<line x1="26.2" y1="323.2" x2="352" y2="323.2" stroke="#b0b0b0" stroke-width="0.6"/>
<path d="M27.4 325.3 l2.6 -1.6 v3.2 Z" stroke="#999" fill="#f6f6f6" stroke-width="0.4"/>
<rect x="340.6" y="323.6" width="4.6" height="3.8" fill="#f4f4f4" stroke="#8c8c8c" stroke-width="0.5"/>
<rect x="346.2" y="317.6" width="5.2" height="5" fill="#f4f4f4" stroke="#8c8c8c" stroke-width="0.5"/>
<path d="M38.4 254 l1.2 -3.6 1 3 1.2 -3.2 0.8 3.8" stroke="#c01818" fill="none" stroke-width="0.9"/>
<text class="m" x="48.4" y="254" font-size="5.6" fill="#333">rst_1</text>
<text class="m" x="163.4" y="254" font-size="5.6" fill="#333">/rst_1</text>
<rect x="26" y="328" width="328.6" height="13.5" fill="#d6d6d6"/>
<line x1="26" y1="328.4" x2="354.6" y2="328.4" stroke="#f4f4f4" stroke-width="0.7"/>
<text class="s" x="39.4" y="336.8" font-size="5.98" fill="#111" textLength="26" lengthAdjust="spacingAndGlyphs" font-weight="bold">Finished</text>
<line x1="79.6" y1="329.6" x2="79.6" y2="340.4" stroke="#8e8e8e" stroke-width="0.8"/>
<line x1="80.4" y1="329.6" x2="80.4" y2="340.4" stroke="#f6f6f6" stroke-width="0.7"/>
<text class="s" x="81.6" y="336.8" font-size="5.98" fill="#111" textLength="41.6" lengthAdjust="spacingAndGlyphs" font-weight="bold">1 items found.</text>
<rect x="356.4" y="118" width="465.2" height="300.9" fill="#e9eef6"/>
<rect x="356.4" y="118" width="0.8" height="300.9" fill="#d8dce2"/>
<rect x="820.9" y="118" width="0.7" height="300.9" fill="#9aa0aa"/>
<rect x="357.2" y="119" width="436.8" height="7.8" fill="url(#gtitle)"/>
<rect x="794" y="118" width="26.9" height="8.8" fill="#eef1f6"/>
<rect x="357.4" y="119.4" width="6.6" height="6.8" fill="#7b2fc0"/>
<text class="s" x="358" y="124.8" font-size="4.05" fill="#e8d8ff" font-weight="bold">nW</text>
<text class="s" x="504" y="124.9" font-size="6.44" fill="#ffffff" textLength="163" lengthAdjust="spacingAndGlyphs" font-weight="bold">&lt;nWave:1&gt; /slowfs/.../top/debug/i250.fsdb</text>
<line x1="798" y1="124.8" x2="803.4" y2="124.8" stroke="#222" stroke-width="1.1"/>
<rect x="806.4" y="120.4" width="5.2" height="4.6" fill="none" stroke="#222" stroke-width="0.9"/>
<line x1="806.4" y1="121" x2="811.6" y2="121" stroke="#222" stroke-width="1.5"/>
<path d="M814.4 120.2 L819.2 125 M819.2 120.2 L814.4 125" stroke="#111" fill="none" stroke-width="1.5"/>
<rect x="357.2" y="126.8" width="463.7" height="12.2" fill="url(#gmenu)"/>
<text class="s" x="361" y="136" font-size="6.3" fill="#26282c" textLength="9.4" lengthAdjust="spacingAndGlyphs">File</text>
<line x1="361" y1="137.2" x2="364.2" y2="137.2" stroke="#26282c" stroke-width="0.5"/>
<text class="s" x="374.6" y="136" font-size="6.3" fill="#26282c" textLength="14.8" lengthAdjust="spacingAndGlyphs">Signal</text>
<line x1="374.6" y1="137.2" x2="377.8" y2="137.2" stroke="#26282c" stroke-width="0.5"/>
<text class="s" x="394" y="136" font-size="6.3" fill="#26282c" textLength="11.6" lengthAdjust="spacingAndGlyphs">View</text>
<line x1="394" y1="137.2" x2="397.2" y2="137.2" stroke="#26282c" stroke-width="0.5"/>
<text class="s" x="411" y="136" font-size="6.3" fill="#26282c" textLength="23.6" lengthAdjust="spacingAndGlyphs">Waveform</text>
<line x1="411" y1="137.2" x2="414.2" y2="137.2" stroke="#26282c" stroke-width="0.5"/>
<text class="s" x="441" y="136" font-size="6.3" fill="#26282c" textLength="16.6" lengthAdjust="spacingAndGlyphs">Analog</text>
<line x1="441" y1="137.2" x2="444.2" y2="137.2" stroke="#26282c" stroke-width="0.5"/>
<text class="s" x="462.6" y="136" font-size="6.3" fill="#26282c" textLength="13.8" lengthAdjust="spacingAndGlyphs">Tools</text>
<line x1="462.6" y1="137.2" x2="465.8" y2="137.2" stroke="#26282c" stroke-width="0.5"/>
<text class="s" x="481" y="136" font-size="6.3" fill="#26282c" textLength="18.6" lengthAdjust="spacingAndGlyphs">Window</text>
<line x1="481" y1="137.2" x2="484.2" y2="137.2" stroke="#26282c" stroke-width="0.5"/>
<text class="s" x="505" y="136" font-size="6.3" fill="#26282c" textLength="11.4" lengthAdjust="spacingAndGlyphs">Help</text>
<line x1="505" y1="137.2" x2="508.2" y2="137.2" stroke="#26282c" stroke-width="0.5"/>
<rect x="762" y="130.3" width="40.4" height="7.7" fill="#ffffff" stroke="#b9c4d6" stroke-width="0.6"/>
<rect x="805" y="131.4" width="6" height="5.6" fill="#c8d2de" stroke="#7f8a9a" stroke-width="0.5"/>
<line x1="806.4" y1="133" x2="809.6" y2="133" stroke="#5b6470" stroke-width="0.6"/>
<line x1="806.4" y1="135" x2="809.6" y2="135" stroke="#5b6470" stroke-width="0.6"/>
<path d="M814.2 133 h4.4 l-2.2 2.8 Z" stroke="none" fill="#222" stroke-width="1"/>
<rect x="357.2" y="139" width="463.7" height="13.5" fill="url(#gtool)"/>
<g transform="translate(0 146.4) scale(1 0.84) translate(0 -146.4)">
<path d="M363.8 149.8 V142.8 h3.4 l1 1.2 h4.8 V149.8 Z" stroke="#b07c08" fill="#f0b41c" stroke-width="0.5"/>
<path d="M363.8 145.6 h9.2" stroke="#fbe08a" fill="none" stroke-width="0.9"/>
<path d="M379.4 147.8 q-1.6 -3.6 2.6 -4.4 q3.6 -0.4 3.6 2.6 q-0.6 2.8 -3.8 2.4" stroke="#8fb2e2" fill="none" stroke-width="1.3"/>
<line x1="390.4" y1="141.4" x2="390.4" y2="150.6" stroke="#c2cfe2" stroke-width="0.6"/>
<path d="M396 144.4 q4.6 -2.6 6 1.6 v4" stroke="#2a62c8" fill="none" stroke-width="1.6"/>
<path d="M394.8 145.8 l2.8 -3.6 0.8 3.8 Z" stroke="none" fill="#2a62c8" stroke-width="1"/>
<path d="M408.6 142.4 L414.6 149.8 M414.6 142.4 L408.6 149.8" stroke="#4f86d6" fill="none" stroke-width="1.1"/>
<rect x="421.4" y="144" width="5" height="6.2" fill="#dbe8fa" stroke="#3c78d0" stroke-width="0.8"/>
<rect x="423.8" y="142" width="5" height="6.2" fill="#eaf2fd" stroke="#3c78d0" stroke-width="0.8"/>
<rect x="434.4" y="142.6" width="7.4" height="7.8" fill="#e4e4e0" stroke="#a9aaa6" stroke-width="0.7"/>
<rect x="436.4" y="144.8" width="4.4" height="4.6" fill="#ffffff"/>
<rect x="436.6" y="141.8" width="3.2" height="1.8" fill="#b8b8b0"/>
<line x1="447.4" y1="141.4" x2="447.4" y2="150.6" stroke="#c2cfe2" stroke-width="0.6"/>
<path d="M452.8 142.4 h3 l1.8 2.6 v5 h-2.4 l-2.4 -3 Z" stroke="none" fill="#f2c81a" stroke-width="1"/>
</g>
<rect x="462" y="141" width="35.4" height="10.2" fill="#ffffff" stroke="#c2cfe2" stroke-width="0.5"/>
<text class="s" x="464.6" y="148.2" font-size="5.2" fill="#555" textLength="18.4" lengthAdjust="spacingAndGlyphs">400,000</text>
<path d="M504 141.8 v6 M500.8 148.6 q3.2 2.6 6.4 0 M501.6 146.2 h4.8" stroke="#444" fill="none" stroke-width="0.9"/>
<rect x="512" y="141" width="35" height="10.2" fill="#ffffff" stroke="#c2cfe2" stroke-width="0.5"/>
<text class="s" x="514" y="148.2" font-size="5.2" fill="#555">0</text>
<path d="M549.4 148.6 l4 -5.4 4 5.4 Z" stroke="#5f8ad0" fill="#8fb0e4" stroke-width="0.5"/>
<path d="M559.6 144.6 h4.6 l-2.3 2.8 Z" stroke="none" fill="#222" stroke-width="1"/>
<text class="s" x="566.4" y="148.2" font-size="5.2" fill="#555" textLength="21.4" lengthAdjust="spacingAndGlyphs">-400,000</text>
<text class="s" x="604" y="148.2" font-size="5.2" fill="#555" textLength="14" lengthAdjust="spacingAndGlyphs">x 1ns</text>
<line x1="622" y1="141.4" x2="622" y2="150.6" stroke="#c2cfe2" stroke-width="0.6"/>
<rect x="626.8" y="142.8" width="8.4" height="7.4" fill="#d9dee6" stroke="#8a929e" stroke-width="0.5"/>
<circle cx="630.6" cy="145.8" r="2.2" fill="#f4f6f8" stroke="#3a3a3a" stroke-width="0.8"/>
<line x1="632.2" y1="147.4" x2="634.2" y2="149.6" stroke="#2a2a2a" stroke-width="1.1"/>
<rect x="639.6" y="142.8" width="8.4" height="7.4" fill="#d9dee6" stroke="#8a929e" stroke-width="0.5"/>
<circle cx="643.4" cy="145.8" r="2.2" fill="#f4f6f8" stroke="#3a3a3a" stroke-width="0.8"/>
<line x1="645" y1="147.4" x2="647" y2="149.6" stroke="#2a2a2a" stroke-width="1.1"/>
<rect x="652.6" y="142.8" width="8.4" height="7.4" fill="#d9dee6" stroke="#8a929e" stroke-width="0.5"/>
<circle cx="656.4" cy="145.8" r="2.2" fill="#f4f6f8" stroke="#3a3a3a" stroke-width="0.8"/>
<line x1="658" y1="147.4" x2="660" y2="149.6" stroke="#2a2a2a" stroke-width="1.1"/>
<line x1="665.4" y1="141.4" x2="665.4" y2="150.6" stroke="#c2cfe2" stroke-width="0.6"/>
<text class="s" x="668" y="148.2" font-size="5.4" fill="#444" textLength="8.4" lengthAdjust="spacingAndGlyphs">By:</text>
<rect x="680" y="141.4" width="8.6" height="9.6" fill="#f4f7fb" stroke="#8a93a3" stroke-width="0.5"/>
<path d="M682 149.6 h2 v-7 h3" stroke="#2f62c4" fill="none" stroke-width="1.1"/>
<path d="M691.4 144.6 h4.6 l-2.3 2.8 Z" stroke="none" fill="#222" stroke-width="1"/>
<rect x="701" y="141.8" width="9.6" height="9" fill="#e6eaf0" stroke="#7f8896" stroke-width="0.7"/>
<path d="M703.8 146.3 l3.4 -2.4 v4.8 Z" stroke="none" fill="#222" stroke-width="1"/>
<rect x="713.4" y="141.8" width="9.6" height="9" fill="#e6eaf0" stroke="#7f8896" stroke-width="0.7"/>
<path d="M720.2 146.3 l-3.4 -2.4 v4.8 Z" stroke="none" fill="#222" stroke-width="1"/>
<line x1="726.6" y1="141.4" x2="726.6" y2="150.6" stroke="#c2cfe2" stroke-width="0.6"/>
<text class="s" x="730" y="148.2" font-size="5.4" fill="#444" textLength="15" lengthAdjust="spacingAndGlyphs">Go to:</text>
<rect x="748" y="141" width="28.4" height="10.4" fill="#f8fafc" stroke="#9aa5b8" stroke-width="0.6"/>
<text class="s" x="750" y="148.2" font-size="5.4" fill="#555">G1</text>
<path d="M770.6 144.8 h4.2 l-2.1 2.8 Z" stroke="none" fill="#222" stroke-width="1"/>
<line x1="780.4" y1="141.4" x2="780.4" y2="150.6" stroke="#c2cfe2" stroke-width="0.6"/>
<path d="M786.6 141.6 h4.4 v4 h2.4 l-4.6 4 -4.6 -4 h2.4 Z" stroke="none" fill="#3f86d8" stroke-width="1"/>
<line x1="784" y1="150.6" x2="793.6" y2="150.6" stroke="#2f6fc0" stroke-width="1"/>
<path d="M796.2 144.8 h4.4 l-2.2 2.8 Z" stroke="none" fill="#222" stroke-width="1"/>
<rect x="358.4" y="152.5" width="99.4" height="248.5" fill="#000"/>
<rect x="457.8" y="152.5" width="9" height="248.5" fill="#e6e6e6"/>
<line x1="458.2" y1="152.5" x2="458.2" y2="401" stroke="#fafafa" stroke-width="0.8"/>
<rect x="459" y="153.4" width="6.4" height="6.6" fill="#f2f2f2" stroke="#8c8c8c" stroke-width="0.5"/>
<rect x="459.2" y="379" width="6" height="16" fill="#9c9c9c"/>
<rect x="459" y="395.6" width="6.4" height="4.8" fill="#f2f2f2" stroke="#8c8c8c" stroke-width="0.5"/>
<rect x="466.8" y="152.5" width="30.6" height="248.5" fill="#000"/>
<rect x="497.4" y="152.5" width="2.3" height="248.5" fill="#e8e8e8"/>
<rect x="499.7" y="152.5" width="313.3" height="248.5" fill="#000"/>
<rect x="813" y="152.5" width="7.9" height="248.5" fill="#e6e6e6"/>
<rect x="813.8" y="153.4" width="6.2" height="6.6" fill="#f2f2f2" stroke="#8c8c8c" stroke-width="0.5"/>
<rect x="814.4" y="378" width="5.2" height="17" fill="#8c8c8c"/>
<rect x="813.8" y="395.6" width="6.2" height="5" fill="#f2f2f2" stroke="#8c8c8c" stroke-width="0.5"/>
<rect x="814.6" y="401.6" width="6" height="6" fill="#ff0000"/>
<rect x="360.6" y="171.8" width="2.2" height="2.4" fill="#18c018"/>
<text class="m" x="365.6" y="174.9" font-size="5.6" fill="#22c822" font-weight="bold">G1</text>
<text class="m" x="359.6" y="184.57" font-size="5.6" fill="#25c2c6">/top/identify_cycle</text>
<text class="m" x="494.4" y="184.57" font-size="5.6" fill="#25c2c6" text-anchor="end">-1 -&gt; 0</text>
<rect x="358.8" y="188.74" width="6.6" height="7.2" fill="#e03030"/>
<line x1="359.6" y1="191.34" x2="364.6" y2="191.34" stroke="#f6b0b0" stroke-width="0.8"/>
<rect x="366" y="188.74" width="88.6" height="7.3" fill="#00ffff"/>
<line x1="358.8" y1="196.44" x2="454.6" y2="196.44" stroke="#d8d800" stroke-width="0.9"/>
<text class="m" x="368" y="194.24" font-size="5.6" fill="#0a5a5a" font-weight="bold">/top/identify_sampleclock</text>
<text class="m" x="494.4" y="194.24" font-size="5.6" fill="#25c2c6" text-anchor="end">0 -&gt; 1</text>
<rect x="359.4" y="198.81" width="5.6" height="6.2" fill="#e2eaf4" stroke="#8fa6c8" stroke-width="0.5"/>
<rect x="360.6" y="199.81" width="3.2" height="4" fill="#3a78d8"/>
<text class="m" x="368" y="203.91" font-size="5.6" fill="#25c2c6">/top/clk</text>
<text class="m" x="494.4" y="203.91" font-size="5.6" fill="#25c2c6" text-anchor="end">0 -&gt; 1</text>
<rect x="359.4" y="208.48" width="5.6" height="6.2" fill="#e2eaf4" stroke="#8fa6c8" stroke-width="0.5"/>
<line x1="360" y1="212.48" x2="364.4" y2="212.48" stroke="#4a6a98" stroke-width="1"/>
<line x1="360" y1="210.28" x2="364.4" y2="210.28" stroke="#9eb0c8" stroke-width="0.8"/>
<text class="m" x="368" y="213.58" font-size="5.6" fill="#25c2c6">/top/rst_1</text>
<text class="m" x="494.4" y="213.58" font-size="5.6" fill="#25c2c6" text-anchor="end">1 -&gt; 0</text>
<rect x="359.4" y="218.15" width="5.6" height="6.2" fill="#e2eaf4" stroke="#8fa6c8" stroke-width="0.5"/>
<line x1="360" y1="222.15" x2="364.4" y2="222.15" stroke="#4a6a98" stroke-width="1"/>
<line x1="360" y1="219.95" x2="364.4" y2="219.95" stroke="#9eb0c8" stroke-width="0.8"/>
<text class="m" x="368" y="223.25" font-size="5.6" fill="#25c2c6">/top/rst_2</text>
<text class="m" x="494.4" y="223.25" font-size="5.6" fill="#25c2c6" text-anchor="end">1</text>
<rect x="359.4" y="227.82" width="5.6" height="6.2" fill="#e2eaf4" stroke="#8fa6c8" stroke-width="0.5"/>
<line x1="360" y1="231.82" x2="364.4" y2="231.82" stroke="#4a6a98" stroke-width="1"/>
<line x1="360" y1="229.62" x2="364.4" y2="229.62" stroke="#9eb0c8" stroke-width="0.8"/>
<text class="m" x="368" y="232.92" font-size="5.6" fill="#25c2c6">/top/rst_3</text>
<text class="m" x="494.4" y="232.92" font-size="5.6" fill="#25c2c6" text-anchor="end">1</text>
<rect x="359.4" y="237.49" width="5.6" height="6.2" fill="#e2eaf4" stroke="#8fa6c8" stroke-width="0.5"/>
<line x1="360" y1="241.49" x2="364.4" y2="241.49" stroke="#4a6a98" stroke-width="1"/>
<line x1="360" y1="239.29" x2="364.4" y2="239.29" stroke="#9eb0c8" stroke-width="0.8"/>
<text class="m" x="368" y="242.59" font-size="5.6" fill="#25c2c6">/top/rst_4</text>
<text class="m" x="494.4" y="242.59" font-size="5.6" fill="#25c2c6" text-anchor="end">1</text>
<rect x="359.4" y="247.16" width="5.6" height="6.2" fill="#e2eaf4" stroke="#8fa6c8" stroke-width="0.5"/>
<line x1="360" y1="251.16" x2="364.4" y2="251.16" stroke="#4a6a98" stroke-width="1"/>
<line x1="360" y1="248.96" x2="364.4" y2="248.96" stroke="#9eb0c8" stroke-width="0.8"/>
<text class="m" x="368" y="252.26" font-size="5.6" fill="#25c2c6">/top/rst_13</text>
<text class="m" x="494.4" y="252.26" font-size="5.6" fill="#25c2c6" text-anchor="end">1</text>
<rect x="359.4" y="256.83" width="5.6" height="6.2" fill="#e2eaf4" stroke="#8fa6c8" stroke-width="0.5"/>
<line x1="360" y1="260.83" x2="364.4" y2="260.83" stroke="#4a6a98" stroke-width="1"/>
<line x1="360" y1="258.63" x2="364.4" y2="258.63" stroke="#9eb0c8" stroke-width="0.8"/>
<text class="m" x="368" y="261.93" font-size="5.6" fill="#25c2c6">/top/rst_14</text>
<text class="m" x="494.4" y="261.93" font-size="5.6" fill="#25c2c6" text-anchor="end">1</text>
<rect x="359.4" y="266.5" width="5.6" height="6.2" fill="#e2eaf4" stroke="#8fa6c8" stroke-width="0.5"/>
<line x1="360" y1="270.5" x2="364.4" y2="270.5" stroke="#4a6a98" stroke-width="1"/>
<line x1="360" y1="268.3" x2="364.4" y2="268.3" stroke="#9eb0c8" stroke-width="0.8"/>
<text class="m" x="368" y="271.6" font-size="5.6" fill="#25c2c6">/top/rst_15</text>
<text class="m" x="494.4" y="271.6" font-size="5.6" fill="#25c2c6" text-anchor="end">1</text>
<rect x="359.4" y="276.17" width="5.6" height="6.2" fill="#e2eaf4" stroke="#8fa6c8" stroke-width="0.5"/>
<line x1="360" y1="280.17" x2="364.4" y2="280.17" stroke="#4a6a98" stroke-width="1"/>
<line x1="360" y1="277.97" x2="364.4" y2="277.97" stroke="#9eb0c8" stroke-width="0.8"/>
<text class="m" x="368" y="281.27" font-size="5.6" fill="#25c2c6">/top/rst_16</text>
<text class="m" x="494.4" y="281.27" font-size="5.6" fill="#25c2c6" text-anchor="end">1</text>
<rect x="359.4" y="285.84" width="5.6" height="6.2" fill="#e2eaf4" stroke="#8fa6c8" stroke-width="0.5"/>
<line x1="360" y1="289.84" x2="364.4" y2="289.84" stroke="#4a6a98" stroke-width="1"/>
<line x1="360" y1="287.64" x2="364.4" y2="287.64" stroke="#9eb0c8" stroke-width="0.8"/>
<text class="m" x="368" y="290.94" font-size="5.6" fill="#25c2c6">/top/stat0/cntr[15:0]</text>
<text class="m" x="494.4" y="290.94" font-size="5.6" fill="#25c2c6" text-anchor="end">0</text>
<rect x="359.4" y="295.51" width="5.6" height="6.2" fill="#e2eaf4" stroke="#8fa6c8" stroke-width="0.5"/>
<line x1="360" y1="299.51" x2="364.4" y2="299.51" stroke="#4a6a98" stroke-width="1"/>
<line x1="360" y1="297.31" x2="364.4" y2="297.31" stroke="#9eb0c8" stroke-width="0.8"/>
<text class="m" x="368" y="300.61" font-size="5.6" fill="#25c2c6">/top/stat0/qf[31:0]</text>
<text class="m" x="494.4" y="300.61" font-size="5.6" fill="#25c2c6" text-anchor="end">0</text>
<rect x="359.4" y="305.18" width="5.6" height="6.2" fill="#e2eaf4" stroke="#8fa6c8" stroke-width="0.5"/>
<line x1="360" y1="309.18" x2="364.4" y2="309.18" stroke="#4a6a98" stroke-width="1"/>
<line x1="360" y1="306.98" x2="364.4" y2="306.98" stroke="#9eb0c8" stroke-width="0.8"/>
<text class="m" x="368" y="310.28" font-size="5.6" fill="#25c2c6">/top/stat0/seqi1</text>
<text class="m" x="494.4" y="310.28" font-size="5.6" fill="#25c2c6" text-anchor="end">0</text>
<rect x="359.4" y="314.85" width="5.6" height="6.2" fill="#e2eaf4" stroke="#8fa6c8" stroke-width="0.5"/>
<line x1="360" y1="318.85" x2="364.4" y2="318.85" stroke="#4a6a98" stroke-width="1"/>
<line x1="360" y1="316.65" x2="364.4" y2="316.65" stroke="#9eb0c8" stroke-width="0.8"/>
<text class="m" x="368" y="319.95" font-size="5.6" fill="#25c2c6">/top/stat1/cntr[15:0]</text>
<text class="m" x="494.4" y="319.95" font-size="5.6" fill="#25c2c6" text-anchor="end">1111</text>
<rect x="359.4" y="324.52" width="5.6" height="6.2" fill="#e2eaf4" stroke="#8fa6c8" stroke-width="0.5"/>
<line x1="360" y1="328.52" x2="364.4" y2="328.52" stroke="#4a6a98" stroke-width="1"/>
<line x1="360" y1="326.32" x2="364.4" y2="326.32" stroke="#9eb0c8" stroke-width="0.8"/>
<text class="m" x="368" y="329.62" font-size="5.6" fill="#25c2c6">/top/stat1/qf[31:0]</text>
<text class="m" x="494.4" y="329.62" font-size="5.6" fill="#25c2c6" text-anchor="end">0</text>
<rect x="359.4" y="334.19" width="5.6" height="6.2" fill="#e2eaf4" stroke="#8fa6c8" stroke-width="0.5"/>
<line x1="360" y1="338.19" x2="364.4" y2="338.19" stroke="#4a6a98" stroke-width="1"/>
<line x1="360" y1="335.99" x2="364.4" y2="335.99" stroke="#9eb0c8" stroke-width="0.8"/>
<text class="m" x="368" y="339.29" font-size="5.6" fill="#25c2c6">/top/stat2/cntr[15:0]</text>
<text class="m" x="494.4" y="339.29" font-size="5.6" fill="#25c2c6" text-anchor="end">2222</text>
<rect x="359.4" y="343.86" width="5.6" height="6.2" fill="#e2eaf4" stroke="#8fa6c8" stroke-width="0.5"/>
<line x1="360" y1="347.86" x2="364.4" y2="347.86" stroke="#4a6a98" stroke-width="1"/>
<line x1="360" y1="345.66" x2="364.4" y2="345.66" stroke="#9eb0c8" stroke-width="0.8"/>
<text class="m" x="368" y="348.96" font-size="5.6" fill="#25c2c6">/top/stat2/qf[31:0]</text>
<text class="m" x="494.4" y="348.96" font-size="5.6" fill="#25c2c6" text-anchor="end">0</text>
<rect x="359.4" y="353.53" width="5.6" height="6.2" fill="#e2eaf4" stroke="#8fa6c8" stroke-width="0.5"/>
<line x1="360" y1="357.53" x2="364.4" y2="357.53" stroke="#4a6a98" stroke-width="1"/>
<line x1="360" y1="355.33" x2="364.4" y2="355.33" stroke="#9eb0c8" stroke-width="0.8"/>
<text class="m" x="368" y="358.63" font-size="5.6" fill="#25c2c6">/top/stat3/cntr[15:0]</text>
<text class="m" x="494.4" y="358.63" font-size="5.6" fill="#25c2c6" text-anchor="end">3333</text>
<rect x="359.4" y="363.2" width="5.6" height="6.2" fill="#e2eaf4" stroke="#8fa6c8" stroke-width="0.5"/>
<line x1="360" y1="367.2" x2="364.4" y2="367.2" stroke="#4a6a98" stroke-width="1"/>
<line x1="360" y1="365" x2="364.4" y2="365" stroke="#9eb0c8" stroke-width="0.8"/>
<text class="m" x="368" y="368.3" font-size="5.6" fill="#25c2c6">/top/stat4/cntr[15:0]</text>
<text class="m" x="494.4" y="368.3" font-size="5.6" fill="#25c2c6" text-anchor="end">4444</text>
<rect x="359.4" y="372.87" width="5.6" height="6.2" fill="#e2eaf4" stroke="#8fa6c8" stroke-width="0.5"/>
<line x1="360" y1="376.87" x2="364.4" y2="376.87" stroke="#4a6a98" stroke-width="1"/>
<line x1="360" y1="374.67" x2="364.4" y2="374.67" stroke="#9eb0c8" stroke-width="0.8"/>
<text class="m" x="368" y="377.97" font-size="5.6" fill="#25c2c6">/top/state/qf[31:0]</text>
<text class="m" x="494.4" y="377.97" font-size="5.6" fill="#25c2c6" text-anchor="end">0</text>
<rect x="359.4" y="382.54" width="5.6" height="6.2" fill="#e2eaf4" stroke="#8fa6c8" stroke-width="0.5"/>
<line x1="360" y1="386.54" x2="364.4" y2="386.54" stroke="#4a6a98" stroke-width="1"/>
<line x1="360" y1="384.34" x2="364.4" y2="384.34" stroke="#9eb0c8" stroke-width="0.8"/>
<text class="m" x="368" y="387.64" font-size="5.6" fill="#25c2c6">/top/statd/qf[31:0]</text>
<text class="m" x="494.4" y="387.64" font-size="5.6" fill="#25c2c6" text-anchor="end">0</text>
<g clip-path="url(#waveclip)">
<rect x="499.7" y="153.3" width="313.3" height="8.5" fill="#8a8a8a"/>
<line x1="498.2" y1="153.6" x2="498.2" y2="161.8" stroke="#e0d820" stroke-width="0.9"/>
<line x1="506.14" y1="159.6" x2="506.14" y2="161.8" stroke="#e0d820" stroke-width="0.8"/>
<line x1="514.08" y1="159.6" x2="514.08" y2="161.8" stroke="#e0d820" stroke-width="0.8"/>
<line x1="522.02" y1="159.6" x2="522.02" y2="161.8" stroke="#e0d820" stroke-width="0.8"/>
<line x1="529.96" y1="159.6" x2="529.96" y2="161.8" stroke="#e0d820" stroke-width="0.8"/>
<line x1="537.9" y1="157.4" x2="537.9" y2="161.8" stroke="#e0d820" stroke-width="0.9"/>
<line x1="545.84" y1="159.6" x2="545.84" y2="161.8" stroke="#e0d820" stroke-width="0.8"/>
<line x1="553.78" y1="159.6" x2="553.78" y2="161.8" stroke="#e0d820" stroke-width="0.8"/>
<line x1="561.72" y1="159.6" x2="561.72" y2="161.8" stroke="#e0d820" stroke-width="0.8"/>
<line x1="569.66" y1="159.6" x2="569.66" y2="161.8" stroke="#e0d820" stroke-width="0.8"/>
<line x1="577.6" y1="153.6" x2="577.6" y2="161.8" stroke="#e0d820" stroke-width="0.9"/>
<line x1="585.54" y1="159.6" x2="585.54" y2="161.8" stroke="#e0d820" stroke-width="0.8"/>
<line x1="593.48" y1="159.6" x2="593.48" y2="161.8" stroke="#e0d820" stroke-width="0.8"/>
<line x1="601.42" y1="159.6" x2="601.42" y2="161.8" stroke="#e0d820" stroke-width="0.8"/>
<line x1="609.36" y1="159.6" x2="609.36" y2="161.8" stroke="#e0d820" stroke-width="0.8"/>
<line x1="617.3" y1="157.4" x2="617.3" y2="161.8" stroke="#e0d820" stroke-width="0.9"/>
<line x1="625.24" y1="159.6" x2="625.24" y2="161.8" stroke="#e0d820" stroke-width="0.8"/>
<line x1="633.18" y1="159.6" x2="633.18" y2="161.8" stroke="#e0d820" stroke-width="0.8"/>
<line x1="641.12" y1="159.6" x2="641.12" y2="161.8" stroke="#e0d820" stroke-width="0.8"/>
<line x1="649.06" y1="159.6" x2="649.06" y2="161.8" stroke="#e0d820" stroke-width="0.8"/>
<line x1="657" y1="153.6" x2="657" y2="161.8" stroke="#e0d820" stroke-width="0.9"/>
<line x1="664.94" y1="159.6" x2="664.94" y2="161.8" stroke="#e0d820" stroke-width="0.8"/>
<line x1="672.88" y1="159.6" x2="672.88" y2="161.8" stroke="#e0d820" stroke-width="0.8"/>
<line x1="680.82" y1="159.6" x2="680.82" y2="161.8" stroke="#e0d820" stroke-width="0.8"/>
<line x1="688.76" y1="159.6" x2="688.76" y2="161.8" stroke="#e0d820" stroke-width="0.8"/>
<line x1="696.7" y1="157.4" x2="696.7" y2="161.8" stroke="#e0d820" stroke-width="0.9"/>
<line x1="704.64" y1="159.6" x2="704.64" y2="161.8" stroke="#e0d820" stroke-width="0.8"/>
<line x1="712.58" y1="159.6" x2="712.58" y2="161.8" stroke="#e0d820" stroke-width="0.8"/>
<line x1="720.52" y1="159.6" x2="720.52" y2="161.8" stroke="#e0d820" stroke-width="0.8"/>
<line x1="728.46" y1="159.6" x2="728.46" y2="161.8" stroke="#e0d820" stroke-width="0.8"/>
<line x1="736.4" y1="153.6" x2="736.4" y2="161.8" stroke="#e0d820" stroke-width="0.9"/>
<line x1="744.34" y1="159.6" x2="744.34" y2="161.8" stroke="#e0d820" stroke-width="0.8"/>
<line x1="752.28" y1="159.6" x2="752.28" y2="161.8" stroke="#e0d820" stroke-width="0.8"/>
<line x1="760.22" y1="159.6" x2="760.22" y2="161.8" stroke="#e0d820" stroke-width="0.8"/>
<line x1="768.16" y1="159.6" x2="768.16" y2="161.8" stroke="#e0d820" stroke-width="0.8"/>
<line x1="776.1" y1="157.4" x2="776.1" y2="161.8" stroke="#e0d820" stroke-width="0.9"/>
<line x1="784.04" y1="159.6" x2="784.04" y2="161.8" stroke="#e0d820" stroke-width="0.8"/>
<line x1="791.98" y1="159.6" x2="791.98" y2="161.8" stroke="#e0d820" stroke-width="0.8"/>
<line x1="799.92" y1="159.6" x2="799.92" y2="161.8" stroke="#e0d820" stroke-width="0.8"/>
<line x1="807.86" y1="159.6" x2="807.86" y2="161.8" stroke="#e0d820" stroke-width="0.8"/>
<line x1="815.8" y1="153.6" x2="815.8" y2="161.8" stroke="#e0d820" stroke-width="0.9"/>
<text class="s" x="579" y="158.8" font-size="5.6" fill="#e0d820" textLength="23" lengthAdjust="spacingAndGlyphs">200,000</text>
<text class="s" x="658.4" y="158.8" font-size="5.6" fill="#e0d820" textLength="23" lengthAdjust="spacingAndGlyphs">400,000</text>
<text class="s" x="737.8" y="158.8" font-size="5.6" fill="#e0d820" textLength="23" lengthAdjust="spacingAndGlyphs">600,000</text>
<rect x="499.7" y="188.7" width="313.3" height="7.2" fill="#787878"/>
<line x1="499.7" y1="188.24" x2="506.14" y2="188.24" stroke="#1c9c1c" stroke-width="1.1"/>
<line x1="506.14" y1="187.69" x2="506.14" y2="196.49" stroke="#1ca8aa" stroke-width="1.1"/>
<line x1="506.14" y1="195.94" x2="514.08" y2="195.94" stroke="#1ca8aa" stroke-width="1.1"/>
<line x1="514.08" y1="187.69" x2="514.08" y2="196.49" stroke="#1c9c1c" stroke-width="1.1"/>
<line x1="514.08" y1="188.24" x2="522.02" y2="188.24" stroke="#1c9c1c" stroke-width="1.1"/>
<line x1="522.02" y1="187.69" x2="522.02" y2="196.49" stroke="#1ca8aa" stroke-width="1.1"/>
<line x1="522.02" y1="195.94" x2="529.96" y2="195.94" stroke="#1ca8aa" stroke-width="1.1"/>
<line x1="529.96" y1="187.69" x2="529.96" y2="196.49" stroke="#1c9c1c" stroke-width="1.1"/>
<line x1="529.96" y1="188.24" x2="537.9" y2="188.24" stroke="#1c9c1c" stroke-width="1.1"/>
<line x1="537.9" y1="187.69" x2="537.9" y2="196.49" stroke="#1ca8aa" stroke-width="1.1"/>
<line x1="537.9" y1="195.94" x2="545.84" y2="195.94" stroke="#1ca8aa" stroke-width="1.1"/>
<line x1="545.84" y1="187.69" x2="545.84" y2="196.49" stroke="#1c9c1c" stroke-width="1.1"/>
<line x1="545.84" y1="188.24" x2="553.78" y2="188.24" stroke="#1c9c1c" stroke-width="1.1"/>
<line x1="553.78" y1="187.69" x2="553.78" y2="196.49" stroke="#1ca8aa" stroke-width="1.1"/>
<line x1="553.78" y1="195.94" x2="561.72" y2="195.94" stroke="#1ca8aa" stroke-width="1.1"/>
<line x1="561.72" y1="187.69" x2="561.72" y2="196.49" stroke="#1c9c1c" stroke-width="1.1"/>
<line x1="561.72" y1="188.24" x2="569.66" y2="188.24" stroke="#1c9c1c" stroke-width="1.1"/>
<line x1="569.66" y1="187.69" x2="569.66" y2="196.49" stroke="#1ca8aa" stroke-width="1.1"/>
<line x1="569.66" y1="195.94" x2="577.6" y2="195.94" stroke="#1ca8aa" stroke-width="1.1"/>
<line x1="577.6" y1="187.69" x2="577.6" y2="196.49" stroke="#1c9c1c" stroke-width="1.1"/>
<line x1="577.6" y1="188.24" x2="585.54" y2="188.24" stroke="#1c9c1c" stroke-width="1.1"/>
<line x1="585.54" y1="187.69" x2="585.54" y2="196.49" stroke="#1ca8aa" stroke-width="1.1"/>
<line x1="585.54" y1="195.94" x2="593.48" y2="195.94" stroke="#1ca8aa" stroke-width="1.1"/>
<line x1="593.48" y1="187.69" x2="593.48" y2="196.49" stroke="#1c9c1c" stroke-width="1.1"/>
<line x1="593.48" y1="188.24" x2="601.42" y2="188.24" stroke="#1c9c1c" stroke-width="1.1"/>
<line x1="601.42" y1="187.69" x2="601.42" y2="196.49" stroke="#1ca8aa" stroke-width="1.1"/>
<line x1="601.42" y1="195.94" x2="609.36" y2="195.94" stroke="#1ca8aa" stroke-width="1.1"/>
<line x1="609.36" y1="187.69" x2="609.36" y2="196.49" stroke="#1c9c1c" stroke-width="1.1"/>
<line x1="609.36" y1="188.24" x2="617.3" y2="188.24" stroke="#1c9c1c" stroke-width="1.1"/>
<line x1="617.3" y1="187.69" x2="617.3" y2="196.49" stroke="#1ca8aa" stroke-width="1.1"/>
<line x1="617.3" y1="195.94" x2="625.24" y2="195.94" stroke="#1ca8aa" stroke-width="1.1"/>
<line x1="625.24" y1="187.69" x2="625.24" y2="196.49" stroke="#1c9c1c" stroke-width="1.1"/>
<line x1="625.24" y1="188.24" x2="633.18" y2="188.24" stroke="#1c9c1c" stroke-width="1.1"/>
<line x1="633.18" y1="187.69" x2="633.18" y2="196.49" stroke="#1ca8aa" stroke-width="1.1"/>
<line x1="633.18" y1="195.94" x2="641.12" y2="195.94" stroke="#1ca8aa" stroke-width="1.1"/>
<line x1="641.12" y1="187.69" x2="641.12" y2="196.49" stroke="#1c9c1c" stroke-width="1.1"/>
<line x1="641.12" y1="188.24" x2="649.06" y2="188.24" stroke="#1c9c1c" stroke-width="1.1"/>
<line x1="649.06" y1="187.69" x2="649.06" y2="196.49" stroke="#1ca8aa" stroke-width="1.1"/>
<line x1="649.06" y1="195.94" x2="657" y2="195.94" stroke="#1ca8aa" stroke-width="1.1"/>
<line x1="657" y1="187.69" x2="657" y2="196.49" stroke="#1c9c1c" stroke-width="1.1"/>
<line x1="657" y1="188.24" x2="664.94" y2="188.24" stroke="#1c9c1c" stroke-width="1.1"/>
<line x1="664.94" y1="187.69" x2="664.94" y2="196.49" stroke="#1ca8aa" stroke-width="1.1"/>
<line x1="664.94" y1="195.94" x2="672.88" y2="195.94" stroke="#1ca8aa" stroke-width="1.1"/>
<line x1="672.88" y1="187.69" x2="672.88" y2="196.49" stroke="#1c9c1c" stroke-width="1.1"/>
<line x1="672.88" y1="188.24" x2="680.82" y2="188.24" stroke="#1c9c1c" stroke-width="1.1"/>
<line x1="680.82" y1="187.69" x2="680.82" y2="196.49" stroke="#1ca8aa" stroke-width="1.1"/>
<line x1="680.82" y1="195.94" x2="688.76" y2="195.94" stroke="#1ca8aa" stroke-width="1.1"/>
<line x1="688.76" y1="187.69" x2="688.76" y2="196.49" stroke="#1c9c1c" stroke-width="1.1"/>
<line x1="688.76" y1="188.24" x2="696.7" y2="188.24" stroke="#1c9c1c" stroke-width="1.1"/>
<line x1="696.7" y1="187.69" x2="696.7" y2="196.49" stroke="#1ca8aa" stroke-width="1.1"/>
<line x1="696.7" y1="195.94" x2="704.64" y2="195.94" stroke="#1ca8aa" stroke-width="1.1"/>
<line x1="704.64" y1="187.69" x2="704.64" y2="196.49" stroke="#1c9c1c" stroke-width="1.1"/>
<line x1="704.64" y1="188.24" x2="712.58" y2="188.24" stroke="#1c9c1c" stroke-width="1.1"/>
<line x1="712.58" y1="187.69" x2="712.58" y2="196.49" stroke="#1ca8aa" stroke-width="1.1"/>
<line x1="712.58" y1="195.94" x2="720.52" y2="195.94" stroke="#1ca8aa" stroke-width="1.1"/>
<line x1="720.52" y1="187.69" x2="720.52" y2="196.49" stroke="#1c9c1c" stroke-width="1.1"/>
<line x1="720.52" y1="188.24" x2="728.46" y2="188.24" stroke="#1c9c1c" stroke-width="1.1"/>
<line x1="728.46" y1="187.69" x2="728.46" y2="196.49" stroke="#1ca8aa" stroke-width="1.1"/>
<line x1="728.46" y1="195.94" x2="736.4" y2="195.94" stroke="#1ca8aa" stroke-width="1.1"/>
<line x1="736.4" y1="187.69" x2="736.4" y2="196.49" stroke="#1c9c1c" stroke-width="1.1"/>
<line x1="736.4" y1="188.24" x2="744.34" y2="188.24" stroke="#1c9c1c" stroke-width="1.1"/>
<line x1="744.34" y1="187.69" x2="744.34" y2="196.49" stroke="#1ca8aa" stroke-width="1.1"/>
<line x1="744.34" y1="195.94" x2="752.28" y2="195.94" stroke="#1ca8aa" stroke-width="1.1"/>
<line x1="752.28" y1="187.69" x2="752.28" y2="196.49" stroke="#1c9c1c" stroke-width="1.1"/>
<line x1="752.28" y1="188.24" x2="760.22" y2="188.24" stroke="#1c9c1c" stroke-width="1.1"/>
<line x1="760.22" y1="187.69" x2="760.22" y2="196.49" stroke="#1ca8aa" stroke-width="1.1"/>
<line x1="760.22" y1="195.94" x2="768.16" y2="195.94" stroke="#1ca8aa" stroke-width="1.1"/>
<line x1="768.16" y1="187.69" x2="768.16" y2="196.49" stroke="#1c9c1c" stroke-width="1.1"/>
<line x1="768.16" y1="188.24" x2="776.1" y2="188.24" stroke="#1c9c1c" stroke-width="1.1"/>
<line x1="776.1" y1="187.69" x2="776.1" y2="196.49" stroke="#1ca8aa" stroke-width="1.1"/>
<line x1="776.1" y1="195.94" x2="784.04" y2="195.94" stroke="#1ca8aa" stroke-width="1.1"/>
<line x1="784.04" y1="187.69" x2="784.04" y2="196.49" stroke="#1c9c1c" stroke-width="1.1"/>
<line x1="784.04" y1="188.24" x2="791.98" y2="188.24" stroke="#1c9c1c" stroke-width="1.1"/>
<line x1="791.98" y1="187.69" x2="791.98" y2="196.49" stroke="#1ca8aa" stroke-width="1.1"/>
<line x1="791.98" y1="195.94" x2="799.92" y2="195.94" stroke="#1ca8aa" stroke-width="1.1"/>
<line x1="799.92" y1="187.69" x2="799.92" y2="196.49" stroke="#1c9c1c" stroke-width="1.1"/>
<line x1="799.92" y1="188.24" x2="807.86" y2="188.24" stroke="#1c9c1c" stroke-width="1.1"/>
<line x1="807.86" y1="187.69" x2="807.86" y2="196.49" stroke="#1ca8aa" stroke-width="1.1"/>
<line x1="807.86" y1="195.94" x2="815.8" y2="195.94" stroke="#1ca8aa" stroke-width="1.1"/>
<line x1="815.8" y1="188.24" x2="813.5" y2="188.24" stroke="#1c9c1c" stroke-width="1.1"/>
<line x1="499.7" y1="197.91" x2="506.14" y2="197.91" stroke="#1c9c1c" stroke-width="1.1"/>
<line x1="506.14" y1="197.36" x2="506.14" y2="206.16" stroke="#1ca8aa" stroke-width="1.1"/>
<line x1="506.14" y1="205.61" x2="514.08" y2="205.61" stroke="#1ca8aa" stroke-width="1.1"/>
<line x1="514.08" y1="197.36" x2="514.08" y2="206.16" stroke="#1c9c1c" stroke-width="1.1"/>
<line x1="514.08" y1="197.91" x2="522.02" y2="197.91" stroke="#1c9c1c" stroke-width="1.1"/>
<line x1="522.02" y1="197.36" x2="522.02" y2="206.16" stroke="#1ca8aa" stroke-width="1.1"/>
<line x1="522.02" y1="205.61" x2="529.96" y2="205.61" stroke="#1ca8aa" stroke-width="1.1"/>
<line x1="529.96" y1="197.36" x2="529.96" y2="206.16" stroke="#1c9c1c" stroke-width="1.1"/>
<line x1="529.96" y1="197.91" x2="537.9" y2="197.91" stroke="#1c9c1c" stroke-width="1.1"/>
<line x1="537.9" y1="197.36" x2="537.9" y2="206.16" stroke="#1ca8aa" stroke-width="1.1"/>
<line x1="537.9" y1="205.61" x2="545.84" y2="205.61" stroke="#1ca8aa" stroke-width="1.1"/>
<line x1="545.84" y1="197.36" x2="545.84" y2="206.16" stroke="#1c9c1c" stroke-width="1.1"/>
<line x1="545.84" y1="197.91" x2="553.78" y2="197.91" stroke="#1c9c1c" stroke-width="1.1"/>
<line x1="553.78" y1="197.36" x2="553.78" y2="206.16" stroke="#1ca8aa" stroke-width="1.1"/>
<line x1="553.78" y1="205.61" x2="561.72" y2="205.61" stroke="#1ca8aa" stroke-width="1.1"/>
<line x1="561.72" y1="197.36" x2="561.72" y2="206.16" stroke="#1c9c1c" stroke-width="1.1"/>
<line x1="561.72" y1="197.91" x2="569.66" y2="197.91" stroke="#1c9c1c" stroke-width="1.1"/>
<line x1="569.66" y1="197.36" x2="569.66" y2="206.16" stroke="#1ca8aa" stroke-width="1.1"/>
<line x1="569.66" y1="205.61" x2="577.6" y2="205.61" stroke="#1ca8aa" stroke-width="1.1"/>
<line x1="577.6" y1="197.36" x2="577.6" y2="206.16" stroke="#1c9c1c" stroke-width="1.1"/>
<line x1="577.6" y1="197.91" x2="585.54" y2="197.91" stroke="#1c9c1c" stroke-width="1.1"/>
<line x1="585.54" y1="197.36" x2="585.54" y2="206.16" stroke="#1ca8aa" stroke-width="1.1"/>
<line x1="585.54" y1="205.61" x2="593.48" y2="205.61" stroke="#1ca8aa" stroke-width="1.1"/>
<line x1="593.48" y1="197.36" x2="593.48" y2="206.16" stroke="#1c9c1c" stroke-width="1.1"/>
<line x1="593.48" y1="197.91" x2="601.42" y2="197.91" stroke="#1c9c1c" stroke-width="1.1"/>
<line x1="601.42" y1="197.36" x2="601.42" y2="206.16" stroke="#1ca8aa" stroke-width="1.1"/>
<line x1="601.42" y1="205.61" x2="609.36" y2="205.61" stroke="#1ca8aa" stroke-width="1.1"/>
<line x1="609.36" y1="197.36" x2="609.36" y2="206.16" stroke="#1c9c1c" stroke-width="1.1"/>
<line x1="609.36" y1="197.91" x2="617.3" y2="197.91" stroke="#1c9c1c" stroke-width="1.1"/>
<line x1="617.3" y1="197.36" x2="617.3" y2="206.16" stroke="#1ca8aa" stroke-width="1.1"/>
<line x1="617.3" y1="205.61" x2="625.24" y2="205.61" stroke="#1ca8aa" stroke-width="1.1"/>
<line x1="625.24" y1="197.36" x2="625.24" y2="206.16" stroke="#1c9c1c" stroke-width="1.1"/>
<line x1="625.24" y1="197.91" x2="633.18" y2="197.91" stroke="#1c9c1c" stroke-width="1.1"/>
<line x1="633.18" y1="197.36" x2="633.18" y2="206.16" stroke="#1ca8aa" stroke-width="1.1"/>
<line x1="633.18" y1="205.61" x2="641.12" y2="205.61" stroke="#1ca8aa" stroke-width="1.1"/>
<line x1="641.12" y1="197.36" x2="641.12" y2="206.16" stroke="#1c9c1c" stroke-width="1.1"/>
<line x1="641.12" y1="197.91" x2="649.06" y2="197.91" stroke="#1c9c1c" stroke-width="1.1"/>
<line x1="649.06" y1="197.36" x2="649.06" y2="206.16" stroke="#1ca8aa" stroke-width="1.1"/>
<line x1="649.06" y1="205.61" x2="657" y2="205.61" stroke="#1ca8aa" stroke-width="1.1"/>
<line x1="657" y1="197.36" x2="657" y2="206.16" stroke="#1c9c1c" stroke-width="1.1"/>
<line x1="657" y1="197.91" x2="664.94" y2="197.91" stroke="#1c9c1c" stroke-width="1.1"/>
<line x1="664.94" y1="197.36" x2="664.94" y2="206.16" stroke="#1ca8aa" stroke-width="1.1"/>
<line x1="664.94" y1="205.61" x2="672.88" y2="205.61" stroke="#1ca8aa" stroke-width="1.1"/>
<line x1="672.88" y1="197.36" x2="672.88" y2="206.16" stroke="#1c9c1c" stroke-width="1.1"/>
<line x1="672.88" y1="197.91" x2="680.82" y2="197.91" stroke="#1c9c1c" stroke-width="1.1"/>
<line x1="680.82" y1="197.36" x2="680.82" y2="206.16" stroke="#1ca8aa" stroke-width="1.1"/>
<line x1="680.82" y1="205.61" x2="688.76" y2="205.61" stroke="#1ca8aa" stroke-width="1.1"/>
<line x1="688.76" y1="197.36" x2="688.76" y2="206.16" stroke="#1c9c1c" stroke-width="1.1"/>
<line x1="688.76" y1="197.91" x2="696.7" y2="197.91" stroke="#1c9c1c" stroke-width="1.1"/>
<line x1="696.7" y1="197.36" x2="696.7" y2="206.16" stroke="#1ca8aa" stroke-width="1.1"/>
<line x1="696.7" y1="205.61" x2="704.64" y2="205.61" stroke="#1ca8aa" stroke-width="1.1"/>
<line x1="704.64" y1="197.36" x2="704.64" y2="206.16" stroke="#1c9c1c" stroke-width="1.1"/>
<line x1="704.64" y1="197.91" x2="712.58" y2="197.91" stroke="#1c9c1c" stroke-width="1.1"/>
<line x1="712.58" y1="197.36" x2="712.58" y2="206.16" stroke="#1ca8aa" stroke-width="1.1"/>
<line x1="712.58" y1="205.61" x2="720.52" y2="205.61" stroke="#1ca8aa" stroke-width="1.1"/>
<line x1="720.52" y1="197.36" x2="720.52" y2="206.16" stroke="#1c9c1c" stroke-width="1.1"/>
<line x1="720.52" y1="197.91" x2="728.46" y2="197.91" stroke="#1c9c1c" stroke-width="1.1"/>
<line x1="728.46" y1="197.36" x2="728.46" y2="206.16" stroke="#1ca8aa" stroke-width="1.1"/>
<line x1="728.46" y1="205.61" x2="736.4" y2="205.61" stroke="#1ca8aa" stroke-width="1.1"/>
<line x1="736.4" y1="197.36" x2="736.4" y2="206.16" stroke="#1c9c1c" stroke-width="1.1"/>
<line x1="736.4" y1="197.91" x2="744.34" y2="197.91" stroke="#1c9c1c" stroke-width="1.1"/>
<line x1="744.34" y1="197.36" x2="744.34" y2="206.16" stroke="#1ca8aa" stroke-width="1.1"/>
<line x1="744.34" y1="205.61" x2="752.28" y2="205.61" stroke="#1ca8aa" stroke-width="1.1"/>
<line x1="752.28" y1="197.36" x2="752.28" y2="206.16" stroke="#1c9c1c" stroke-width="1.1"/>
<line x1="752.28" y1="197.91" x2="760.22" y2="197.91" stroke="#1c9c1c" stroke-width="1.1"/>
<line x1="760.22" y1="197.36" x2="760.22" y2="206.16" stroke="#1ca8aa" stroke-width="1.1"/>
<line x1="760.22" y1="205.61" x2="768.16" y2="205.61" stroke="#1ca8aa" stroke-width="1.1"/>
<line x1="768.16" y1="197.36" x2="768.16" y2="206.16" stroke="#1c9c1c" stroke-width="1.1"/>
<line x1="768.16" y1="197.91" x2="776.1" y2="197.91" stroke="#1c9c1c" stroke-width="1.1"/>
<line x1="776.1" y1="197.36" x2="776.1" y2="206.16" stroke="#1ca8aa" stroke-width="1.1"/>
<line x1="776.1" y1="205.61" x2="784.04" y2="205.61" stroke="#1ca8aa" stroke-width="1.1"/>
<line x1="784.04" y1="197.36" x2="784.04" y2="206.16" stroke="#1c9c1c" stroke-width="1.1"/>
<line x1="784.04" y1="197.91" x2="791.98" y2="197.91" stroke="#1c9c1c" stroke-width="1.1"/>
<line x1="791.98" y1="197.36" x2="791.98" y2="206.16" stroke="#1ca8aa" stroke-width="1.1"/>
<line x1="791.98" y1="205.61" x2="799.92" y2="205.61" stroke="#1ca8aa" stroke-width="1.1"/>
<line x1="799.92" y1="197.36" x2="799.92" y2="206.16" stroke="#1c9c1c" stroke-width="1.1"/>
<line x1="799.92" y1="197.91" x2="807.86" y2="197.91" stroke="#1c9c1c" stroke-width="1.1"/>
<line x1="807.86" y1="197.36" x2="807.86" y2="206.16" stroke="#1ca8aa" stroke-width="1.1"/>
<line x1="807.86" y1="205.61" x2="815.8" y2="205.61" stroke="#1ca8aa" stroke-width="1.1"/>
<line x1="815.8" y1="197.91" x2="813.5" y2="197.91" stroke="#1c9c1c" stroke-width="1.1"/>
<line x1="499.7" y1="215.28" x2="609.36" y2="215.28" stroke="#1ca8aa" stroke-width="1.1"/>
<line x1="609.36" y1="207.03" x2="609.36" y2="215.83" stroke="#1c9c1c" stroke-width="1.1"/>
<line x1="609.36" y1="207.58" x2="657" y2="207.58" stroke="#1c9c1c" stroke-width="1.1"/>
<line x1="657" y1="207.03" x2="657" y2="215.83" stroke="#1ca8aa" stroke-width="1.1"/>
<line x1="657" y1="215.28" x2="813.5" y2="215.28" stroke="#1ca8aa" stroke-width="1.1"/>
<line x1="499.7" y1="224.95" x2="609.36" y2="224.95" stroke="#1ca8aa" stroke-width="1.1"/>
<line x1="609.36" y1="216.7" x2="609.36" y2="225.5" stroke="#1c9c1c" stroke-width="1.1"/>
<line x1="609.36" y1="217.25" x2="688.76" y2="217.25" stroke="#1c9c1c" stroke-width="1.1"/>
<line x1="688.76" y1="216.7" x2="688.76" y2="225.5" stroke="#1ca8aa" stroke-width="1.1"/>
<line x1="688.76" y1="224.95" x2="813.5" y2="224.95" stroke="#1ca8aa" stroke-width="1.1"/>
<line x1="499.7" y1="234.62" x2="609.36" y2="234.62" stroke="#1ca8aa" stroke-width="1.1"/>
<line x1="609.36" y1="226.37" x2="609.36" y2="235.17" stroke="#1c9c1c" stroke-width="1.1"/>
<line x1="609.36" y1="226.92" x2="672.88" y2="226.92" stroke="#1c9c1c" stroke-width="1.1"/>
<line x1="672.88" y1="226.37" x2="672.88" y2="235.17" stroke="#1ca8aa" stroke-width="1.1"/>
<line x1="672.88" y1="234.62" x2="813.5" y2="234.62" stroke="#1ca8aa" stroke-width="1.1"/>
<line x1="499.7" y1="244.29" x2="609.36" y2="244.29" stroke="#1ca8aa" stroke-width="1.1"/>
<line x1="609.36" y1="236.04" x2="609.36" y2="244.84" stroke="#1c9c1c" stroke-width="1.1"/>
<line x1="609.36" y1="236.59" x2="704.64" y2="236.59" stroke="#1c9c1c" stroke-width="1.1"/>
<line x1="704.64" y1="236.04" x2="704.64" y2="244.84" stroke="#1ca8aa" stroke-width="1.1"/>
<line x1="704.64" y1="244.29" x2="813.5" y2="244.29" stroke="#1ca8aa" stroke-width="1.1"/>
<line x1="499.7" y1="253.96" x2="609.36" y2="253.96" stroke="#1ca8aa" stroke-width="1.1"/>
<line x1="609.36" y1="245.71" x2="609.36" y2="254.51" stroke="#1c9c1c" stroke-width="1.1"/>
<line x1="609.36" y1="246.26" x2="736.4" y2="246.26" stroke="#1c9c1c" stroke-width="1.1"/>
<line x1="736.4" y1="245.71" x2="736.4" y2="254.51" stroke="#1ca8aa" stroke-width="1.1"/>
<line x1="736.4" y1="253.96" x2="813.5" y2="253.96" stroke="#1ca8aa" stroke-width="1.1"/>
<line x1="499.7" y1="263.63" x2="609.36" y2="263.63" stroke="#1ca8aa" stroke-width="1.1"/>
<line x1="609.36" y1="255.38" x2="609.36" y2="264.18" stroke="#1c9c1c" stroke-width="1.1"/>
<line x1="609.36" y1="255.93" x2="768.16" y2="255.93" stroke="#1c9c1c" stroke-width="1.1"/>
<line x1="768.16" y1="255.38" x2="768.16" y2="264.18" stroke="#1ca8aa" stroke-width="1.1"/>
<line x1="768.16" y1="263.63" x2="813.5" y2="263.63" stroke="#1ca8aa" stroke-width="1.1"/>
<line x1="499.7" y1="273.3" x2="609.36" y2="273.3" stroke="#1ca8aa" stroke-width="1.1"/>
<line x1="609.36" y1="265.05" x2="609.36" y2="273.85" stroke="#1c9c1c" stroke-width="1.1"/>
<line x1="609.36" y1="265.6" x2="720.52" y2="265.6" stroke="#1c9c1c" stroke-width="1.1"/>
<line x1="720.52" y1="265.05" x2="720.52" y2="273.85" stroke="#1ca8aa" stroke-width="1.1"/>
<line x1="720.52" y1="273.3" x2="813.5" y2="273.3" stroke="#1ca8aa" stroke-width="1.1"/>
<line x1="499.7" y1="282.97" x2="609.36" y2="282.97" stroke="#1ca8aa" stroke-width="1.1"/>
<line x1="609.36" y1="274.72" x2="609.36" y2="283.52" stroke="#1c9c1c" stroke-width="1.1"/>
<line x1="609.36" y1="275.27" x2="752.28" y2="275.27" stroke="#1c9c1c" stroke-width="1.1"/>
<line x1="752.28" y1="274.72" x2="752.28" y2="283.52" stroke="#1ca8aa" stroke-width="1.1"/>
<line x1="752.28" y1="282.97" x2="813.5" y2="282.97" stroke="#1ca8aa" stroke-width="1.1"/>
<line x1="514.08" y1="303.73" x2="514.08" y2="312.53" stroke="#1c9c1c" stroke-width="1.1"/>
<line x1="514.08" y1="304.28" x2="529.96" y2="304.28" stroke="#1c9c1c" stroke-width="1.1"/>
<line x1="529.96" y1="303.73" x2="529.96" y2="312.53" stroke="#1ca8aa" stroke-width="1.1"/>
<line x1="529.96" y1="311.98" x2="720.52" y2="311.98" stroke="#1ca8aa" stroke-width="1.1"/>
<line x1="720.52" y1="303.73" x2="720.52" y2="312.53" stroke="#1c9c1c" stroke-width="1.1"/>
<line x1="720.52" y1="304.28" x2="768.16" y2="304.28" stroke="#1c9c1c" stroke-width="1.1"/>
<line x1="768.16" y1="303.73" x2="768.16" y2="312.53" stroke="#1ca8aa" stroke-width="1.1"/>
<line x1="768.16" y1="311.98" x2="799.92" y2="311.98" stroke="#1ca8aa" stroke-width="1.1"/>
<line x1="799.92" y1="303.73" x2="799.92" y2="312.53" stroke="#1c9c1c" stroke-width="1.1"/>
<line x1="799.92" y1="304.28" x2="813.5" y2="304.28" stroke="#1c9c1c" stroke-width="1.1"/>
<path d="M499.8 178.87 H512.48 Q514.08 178.87 514.08 182.67 Q514.08 186.47 512.48 186.47 H499.8 Q498.2 186.47 498.2 182.67 Q498.2 178.87 499.8 178.87 Z" stroke="#a39584" fill="none" stroke-width="0.85"/>
<text class="m" x="506.89" y="184.57" font-size="5.5" fill="#2cccd0" text-anchor="middle" font-weight="bold">-10</text>
<path d="M515.68 178.87 H528.36 Q529.96 178.87 529.96 182.67 Q529.96 186.47 528.36 186.47 H515.68 Q514.08 186.47 514.08 182.67 Q514.08 178.87 515.68 178.87 Z" stroke="#a39584" fill="none" stroke-width="0.85"/>
<text class="m" x="522.02" y="184.57" font-size="5.5" fill="#2cccd0" text-anchor="middle" font-weight="bold">-9</text>
<path d="M531.56 178.87 H544.24 Q545.84 178.87 545.84 182.67 Q545.84 186.47 544.24 186.47 H531.56 Q529.96 186.47 529.96 182.67 Q529.96 178.87 531.56 178.87 Z" stroke="#a39584" fill="none" stroke-width="0.85"/>
<text class="m" x="537.9" y="184.57" font-size="5.5" fill="#2cccd0" text-anchor="middle" font-weight="bold">-8</text>
<path d="M547.44 178.87 H560.12 Q561.72 178.87 561.72 182.67 Q561.72 186.47 560.12 186.47 H547.44 Q545.84 186.47 545.84 182.67 Q545.84 178.87 547.44 178.87 Z" stroke="#a39584" fill="none" stroke-width="0.85"/>
<text class="m" x="553.78" y="184.57" font-size="5.5" fill="#2cccd0" text-anchor="middle" font-weight="bold">-7</text>
<path d="M563.32 178.87 H576 Q577.6 178.87 577.6 182.67 Q577.6 186.47 576 186.47 H563.32 Q561.72 186.47 561.72 182.67 Q561.72 178.87 563.32 178.87 Z" stroke="#a39584" fill="none" stroke-width="0.85"/>
<text class="m" x="569.66" y="184.57" font-size="5.5" fill="#2cccd0" text-anchor="middle" font-weight="bold">-6</text>
<path d="M579.2 178.87 H591.88 Q593.48 178.87 593.48 182.67 Q593.48 186.47 591.88 186.47 H579.2 Q577.6 186.47 577.6 182.67 Q577.6 178.87 579.2 178.87 Z" stroke="#a39584" fill="none" stroke-width="0.85"/>
<text class="m" x="585.54" y="184.57" font-size="5.5" fill="#2cccd0" text-anchor="middle" font-weight="bold">-5</text>
<path d="M595.08 178.87 H607.76 Q609.36 178.87 609.36 182.67 Q609.36 186.47 607.76 186.47 H595.08 Q593.48 186.47 593.48 182.67 Q593.48 178.87 595.08 178.87 Z" stroke="#a39584" fill="none" stroke-width="0.85"/>
<text class="m" x="601.42" y="184.57" font-size="5.5" fill="#2cccd0" text-anchor="middle" font-weight="bold">-4</text>
<path d="M610.96 178.87 H623.64 Q625.24 178.87 625.24 182.67 Q625.24 186.47 623.64 186.47 H610.96 Q609.36 186.47 609.36 182.67 Q609.36 178.87 610.96 178.87 Z" stroke="#a39584" fill="none" stroke-width="0.85"/>
<text class="m" x="617.3" y="184.57" font-size="5.5" fill="#2cccd0" text-anchor="middle" font-weight="bold">-3</text>
<path d="M626.84 178.87 H639.52 Q641.12 178.87 641.12 182.67 Q641.12 186.47 639.52 186.47 H626.84 Q625.24 186.47 625.24 182.67 Q625.24 178.87 626.84 178.87 Z" stroke="#a39584" fill="none" stroke-width="0.85"/>
<text class="m" x="633.18" y="184.57" font-size="5.5" fill="#2cccd0" text-anchor="middle" font-weight="bold">-2</text>
<path d="M642.72 178.87 H655.4 Q657 178.87 657 182.67 Q657 186.47 655.4 186.47 H642.72 Q641.12 186.47 641.12 182.67 Q641.12 178.87 642.72 178.87 Z" stroke="#a39584" fill="none" stroke-width="0.85"/>
<text class="m" x="649.06" y="184.57" font-size="5.5" fill="#2cccd0" text-anchor="middle" font-weight="bold">-1</text>
<path d="M658.6 178.87 H671.28 Q672.88 178.87 672.88 182.67 Q672.88 186.47 671.28 186.47 H658.6 Q657 186.47 657 182.67 Q657 178.87 658.6 178.87 Z" stroke="#a39584" fill="none" stroke-width="0.85"/>
<text class="m" x="664.94" y="184.57" font-size="5.5" fill="#2cccd0" text-anchor="middle" font-weight="bold">0</text>
<path d="M674.48 178.87 H687.16 Q688.76 178.87 688.76 182.67 Q688.76 186.47 687.16 186.47 H674.48 Q672.88 186.47 672.88 182.67 Q672.88 178.87 674.48 178.87 Z" stroke="#a39584" fill="none" stroke-width="0.85"/>
<text class="m" x="680.82" y="184.57" font-size="5.5" fill="#2cccd0" text-anchor="middle" font-weight="bold">1</text>
<path d="M690.36 178.87 H703.04 Q704.64 178.87 704.64 182.67 Q704.64 186.47 703.04 186.47 H690.36 Q688.76 186.47 688.76 182.67 Q688.76 178.87 690.36 178.87 Z" stroke="#a39584" fill="none" stroke-width="0.85"/>
<text class="m" x="696.7" y="184.57" font-size="5.5" fill="#2cccd0" text-anchor="middle" font-weight="bold">2</text>
<path d="M706.24 178.87 H718.92 Q720.52 178.87 720.52 182.67 Q720.52 186.47 718.92 186.47 H706.24 Q704.64 186.47 704.64 182.67 Q704.64 178.87 706.24 178.87 Z" stroke="#a39584" fill="none" stroke-width="0.85"/>
<text class="m" x="712.58" y="184.57" font-size="5.5" fill="#2cccd0" text-anchor="middle" font-weight="bold">3</text>
<path d="M722.12 178.87 H734.8 Q736.4 178.87 736.4 182.67 Q736.4 186.47 734.8 186.47 H722.12 Q720.52 186.47 720.52 182.67 Q720.52 178.87 722.12 178.87 Z" stroke="#a39584" fill="none" stroke-width="0.85"/>
<text class="m" x="728.46" y="184.57" font-size="5.5" fill="#2cccd0" text-anchor="middle" font-weight="bold">4</text>
<path d="M738 178.87 H750.68 Q752.28 178.87 752.28 182.67 Q752.28 186.47 750.68 186.47 H738 Q736.4 186.47 736.4 182.67 Q736.4 178.87 738 178.87 Z" stroke="#a39584" fill="none" stroke-width="0.85"/>
<text class="m" x="744.34" y="184.57" font-size="5.5" fill="#2cccd0" text-anchor="middle" font-weight="bold">5</text>
<path d="M753.88 178.87 H766.56 Q768.16 178.87 768.16 182.67 Q768.16 186.47 766.56 186.47 H753.88 Q752.28 186.47 752.28 182.67 Q752.28 178.87 753.88 178.87 Z" stroke="#a39584" fill="none" stroke-width="0.85"/>
<text class="m" x="760.22" y="184.57" font-size="5.5" fill="#2cccd0" text-anchor="middle" font-weight="bold">6</text>
<path d="M769.76 178.87 H782.44 Q784.04 178.87 784.04 182.67 Q784.04 186.47 782.44 186.47 H769.76 Q768.16 186.47 768.16 182.67 Q768.16 178.87 769.76 178.87 Z" stroke="#a39584" fill="none" stroke-width="0.85"/>
<text class="m" x="776.1" y="184.57" font-size="5.5" fill="#2cccd0" text-anchor="middle" font-weight="bold">7</text>
<path d="M785.64 178.87 H798.32 Q799.92 178.87 799.92 182.67 Q799.92 186.47 798.32 186.47 H785.64 Q784.04 186.47 784.04 182.67 Q784.04 178.87 785.64 178.87 Z" stroke="#a39584" fill="none" stroke-width="0.85"/>
<text class="m" x="791.98" y="184.57" font-size="5.5" fill="#2cccd0" text-anchor="middle" font-weight="bold">8</text>
<path d="M801.52 178.87 H814.2 Q815.8 178.87 815.8 182.67 Q815.8 186.47 814.2 186.47 H801.52 Q799.92 186.47 799.92 182.67 Q799.92 178.87 801.52 178.87 Z" stroke="#a39584" fill="none" stroke-width="0.85"/>
<text class="m" x="806.46" y="184.57" font-size="5.5" fill="#2cccd0" text-anchor="middle" font-weight="bold">9</text>
<path d="M499.8 285.24 H512.48 Q514.08 285.24 514.08 289.04 Q514.08 292.84 512.48 292.84 H499.8 Q498.2 292.84 498.2 289.04 Q498.2 285.24 499.8 285.24 Z" stroke="#a39584" fill="none" stroke-width="0.85"/>
<text class="m" x="506.89" y="290.94" font-size="5.5" fill="#2cccd0" text-anchor="middle" font-weight="bold">00*</text>
<path d="M515.68 285.24 H528.36 Q529.96 285.24 529.96 289.04 Q529.96 292.84 528.36 292.84 H515.68 Q514.08 292.84 514.08 289.04 Q514.08 285.24 515.68 285.24 Z" stroke="#a39584" fill="none" stroke-width="0.85"/>
<text class="m" x="522.02" y="290.94" font-size="5.5" fill="#2cccd0" text-anchor="middle" font-weight="bold">0107</text>
<path d="M531.56 285.24 H544.24 Q545.84 285.24 545.84 289.04 Q545.84 292.84 544.24 292.84 H531.56 Q529.96 292.84 529.96 289.04 Q529.96 285.24 531.56 285.24 Z" stroke="#a39584" fill="none" stroke-width="0.85"/>
<text class="m" x="537.9" y="290.94" font-size="5.5" fill="#2cccd0" text-anchor="middle" font-weight="bold">0108</text>
<path d="M547.44 285.24 H560.12 Q561.72 285.24 561.72 289.04 Q561.72 292.84 560.12 292.84 H547.44 Q545.84 292.84 545.84 289.04 Q545.84 285.24 547.44 285.24 Z" stroke="#a39584" fill="none" stroke-width="0.85"/>
<text class="m" x="553.78" y="290.94" font-size="5.5" fill="#2cccd0" text-anchor="middle" font-weight="bold">0109</text>
<path d="M563.32 285.24 H576 Q577.6 285.24 577.6 289.04 Q577.6 292.84 576 292.84 H563.32 Q561.72 292.84 561.72 289.04 Q561.72 285.24 563.32 285.24 Z" stroke="#a39584" fill="none" stroke-width="0.85"/>
<text class="m" x="569.66" y="290.94" font-size="5.5" fill="#2cccd0" text-anchor="middle" font-weight="bold">010a</text>
<path d="M579.2 285.24 H591.88 Q593.48 285.24 593.48 289.04 Q593.48 292.84 591.88 292.84 H579.2 Q577.6 292.84 577.6 289.04 Q577.6 285.24 579.2 285.24 Z" stroke="#a39584" fill="none" stroke-width="0.85"/>
<text class="m" x="585.54" y="290.94" font-size="5.5" fill="#2cccd0" text-anchor="middle" font-weight="bold">010b</text>
<path d="M595.08 285.24 H607.76 Q609.36 285.24 609.36 289.04 Q609.36 292.84 607.76 292.84 H595.08 Q593.48 292.84 593.48 289.04 Q593.48 285.24 595.08 285.24 Z" stroke="#a39584" fill="none" stroke-width="0.85"/>
<text class="m" x="601.42" y="290.94" font-size="5.5" fill="#2cccd0" text-anchor="middle" font-weight="bold">000c</text>
<path d="M610.96 285.24 H671.28 Q672.88 285.24 672.88 289.04 Q672.88 292.84 671.28 292.84 H610.96 Q609.36 292.84 609.36 289.04 Q609.36 285.24 610.96 285.24 Z" stroke="#a39584" fill="none" stroke-width="0.85"/>
<text class="m" x="641.12" y="290.94" font-size="5.5" fill="#2cccd0" text-anchor="middle" font-weight="bold">0</text>
<path d="M674.48 285.24 H687.16 Q688.76 285.24 688.76 289.04 Q688.76 292.84 687.16 292.84 H674.48 Q672.88 292.84 672.88 289.04 Q672.88 285.24 674.48 285.24 Z" stroke="#a39584" fill="none" stroke-width="0.85"/>
<text class="m" x="680.82" y="290.94" font-size="5.5" fill="#2cccd0" text-anchor="middle" font-weight="bold">1</text>
<path d="M690.36 285.24 H703.04 Q704.64 285.24 704.64 289.04 Q704.64 292.84 703.04 292.84 H690.36 Q688.76 292.84 688.76 289.04 Q688.76 285.24 690.36 285.24 Z" stroke="#a39584" fill="none" stroke-width="0.85"/>
<text class="m" x="696.7" y="290.94" font-size="5.5" fill="#2cccd0" text-anchor="middle" font-weight="bold">2</text>
<path d="M706.24 285.24 H718.92 Q720.52 285.24 720.52 289.04 Q720.52 292.84 718.92 292.84 H706.24 Q704.64 292.84 704.64 289.04 Q704.64 285.24 706.24 285.24 Z" stroke="#a39584" fill="none" stroke-width="0.85"/>
<text class="m" x="712.58" y="290.94" font-size="5.5" fill="#2cccd0" text-anchor="middle" font-weight="bold">3</text>
<path d="M722.12 285.24 H734.8 Q736.4 285.24 736.4 289.04 Q736.4 292.84 734.8 292.84 H722.12 Q720.52 292.84 720.52 289.04 Q720.52 285.24 722.12 285.24 Z" stroke="#a39584" fill="none" stroke-width="0.85"/>
<text class="m" x="728.46" y="290.94" font-size="5.5" fill="#2cccd0" text-anchor="middle" font-weight="bold">4</text>
<path d="M738 285.24 H750.68 Q752.28 285.24 752.28 289.04 Q752.28 292.84 750.68 292.84 H738 Q736.4 292.84 736.4 289.04 Q736.4 285.24 738 285.24 Z" stroke="#a39584" fill="none" stroke-width="0.85"/>
<text class="m" x="744.34" y="290.94" font-size="5.5" fill="#2cccd0" text-anchor="middle" font-weight="bold">5</text>
<path d="M753.88 285.24 H766.56 Q768.16 285.24 768.16 289.04 Q768.16 292.84 766.56 292.84 H753.88 Q752.28 292.84 752.28 289.04 Q752.28 285.24 753.88 285.24 Z" stroke="#a39584" fill="none" stroke-width="0.85"/>
<text class="m" x="760.22" y="290.94" font-size="5.5" fill="#2cccd0" text-anchor="middle" font-weight="bold">6</text>
<path d="M769.76 285.24 H782.44 Q784.04 285.24 784.04 289.04 Q784.04 292.84 782.44 292.84 H769.76 Q768.16 292.84 768.16 289.04 Q768.16 285.24 769.76 285.24 Z" stroke="#a39584" fill="none" stroke-width="0.85"/>
<text class="m" x="776.1" y="290.94" font-size="5.5" fill="#2cccd0" text-anchor="middle" font-weight="bold">7</text>
<path d="M785.64 285.24 H798.32 Q799.92 285.24 799.92 289.04 Q799.92 292.84 798.32 292.84 H785.64 Q784.04 292.84 784.04 289.04 Q784.04 285.24 785.64 285.24 Z" stroke="#a39584" fill="none" stroke-width="0.85"/>
<text class="m" x="791.98" y="290.94" font-size="5.5" fill="#2cccd0" text-anchor="middle" font-weight="bold">8</text>
<path d="M801.52 285.24 H814.2 Q815.8 285.24 815.8 289.04 Q815.8 292.84 814.2 292.84 H801.52 Q799.92 292.84 799.92 289.04 Q799.92 285.24 801.52 285.24 Z" stroke="#a39584" fill="none" stroke-width="0.85"/>
<text class="m" x="806.46" y="290.94" font-size="5.5" fill="#2cccd0" text-anchor="middle" font-weight="bold">9</text>
<path d="M499.8 294.91 H528.36 Q529.96 294.91 529.96 298.71 Q529.96 302.51 528.36 302.51 H499.8 Q498.2 302.51 498.2 298.71 Q498.2 294.91 499.8 294.91 Z" stroke="#a39584" fill="none" stroke-width="0.85"/>
<text class="m" x="514.83" y="300.61" font-size="5.5" fill="#2cccd0" text-anchor="middle" font-weight="bold">7c03_90*</text>
<path d="M531.56 294.91 H576 Q577.6 294.91 577.6 298.71 Q577.6 302.51 576 302.51 H531.56 Q529.96 302.51 529.96 298.71 Q529.96 294.91 531.56 294.91 Z" stroke="#a39584" fill="none" stroke-width="0.85"/>
<text class="m" x="553.78" y="300.61" font-size="5.5" fill="#2cccd0" text-anchor="middle" font-weight="bold">3040_7a1b</text>
<path d="M579.2 294.91 H607.76 Q609.36 294.91 609.36 298.71 Q609.36 302.51 607.76 302.51 H579.2 Q577.6 302.51 577.6 298.71 Q577.6 294.91 579.2 294.91 Z" stroke="#a39584" fill="none" stroke-width="0.85"/>
<text class="m" x="593.48" y="300.61" font-size="5.5" fill="#2cccd0" text-anchor="middle" font-weight="bold">02b_b5ab</text>
<path d="M610.96 294.91 H687.16 Q688.76 294.91 688.76 298.71 Q688.76 302.51 687.16 302.51 H610.96 Q609.36 302.51 609.36 298.71 Q609.36 294.91 610.96 294.91 Z" stroke="#a39584" fill="none" stroke-width="0.85"/>
<text class="m" x="649.06" y="300.61" font-size="5.5" fill="#2cccd0" text-anchor="middle" font-weight="bold">0</text>
<path d="M690.36 294.91 H718.92 Q720.52 294.91 720.52 298.71 Q720.52 302.51 718.92 302.51 H690.36 Q688.76 302.51 688.76 298.71 Q688.76 294.91 690.36 294.91 Z" stroke="#a39584" fill="none" stroke-width="0.85"/>
<text class="m" x="704.64" y="300.61" font-size="5.5" fill="#2cccd0" text-anchor="middle" font-weight="bold">0003_7444</text>
<path d="M722.12 294.91 H766.56 Q768.16 294.91 768.16 298.71 Q768.16 302.51 766.56 302.51 H722.12 Q720.52 302.51 720.52 298.71 Q720.52 294.91 722.12 294.91 Z" stroke="#a39584" fill="none" stroke-width="0.85"/>
<text class="m" x="744.34" y="300.61" font-size="5.5" fill="#2cccd0" text-anchor="middle" font-weight="bold">3936_ea9f</text>
<path d="M769.76 294.91 H798.32 Q799.92 294.91 799.92 298.71 Q799.92 302.51 798.32 302.51 H769.76 Q768.16 302.51 768.16 298.71 Q768.16 294.91 769.76 294.91 Z" stroke="#a39584" fill="none" stroke-width="0.85"/>
<text class="m" x="784.04" y="300.61" font-size="5.5" fill="#2cccd0" text-anchor="middle" font-weight="bold">0e49_2817</text>
<path d="M801.52 294.91 H814.2 Q815.8 294.91 815.8 298.71 Q815.8 302.51 814.2 302.51 H801.52 Q799.92 302.51 799.92 298.71 Q799.92 294.91 801.52 294.91 Z" stroke="#a39584" fill="none" stroke-width="0.85"/>
<text class="m" x="806.46" y="300.61" font-size="5.5" fill="#2cccd0" text-anchor="middle" font-weight="bold">d4*</text>
<path d="M499.8 314.25 H512.48 Q514.08 314.25 514.08 318.05 Q514.08 321.85 512.48 321.85 H499.8 Q498.2 321.85 498.2 318.05 Q498.2 314.25 499.8 314.25 Z" stroke="#a39584" fill="none" stroke-width="0.85"/>
<text class="m" x="506.89" y="319.95" font-size="5.5" fill="#2cccd0" text-anchor="middle" font-weight="bold">11*</text>
<path d="M515.68 314.25 H528.36 Q529.96 314.25 529.96 318.05 Q529.96 321.85 528.36 321.85 H515.68 Q514.08 321.85 514.08 318.05 Q514.08 314.25 515.68 314.25 Z" stroke="#a39584" fill="none" stroke-width="0.85"/>
<text class="m" x="522.02" y="319.95" font-size="5.5" fill="#2cccd0" text-anchor="middle" font-weight="bold">1106</text>
<path d="M531.56 314.25 H544.24 Q545.84 314.25 545.84 318.05 Q545.84 321.85 544.24 321.85 H531.56 Q529.96 321.85 529.96 318.05 Q529.96 314.25 531.56 314.25 Z" stroke="#a39584" fill="none" stroke-width="0.85"/>
<text class="m" x="537.9" y="319.95" font-size="5.5" fill="#2cccd0" text-anchor="middle" font-weight="bold">1107</text>
<path d="M547.44 314.25 H560.12 Q561.72 314.25 561.72 318.05 Q561.72 321.85 560.12 321.85 H547.44 Q545.84 321.85 545.84 318.05 Q545.84 314.25 547.44 314.25 Z" stroke="#a39584" fill="none" stroke-width="0.85"/>
<text class="m" x="553.78" y="319.95" font-size="5.5" fill="#2cccd0" text-anchor="middle" font-weight="bold">1108</text>
<path d="M563.32 314.25 H576 Q577.6 314.25 577.6 318.05 Q577.6 321.85 576 321.85 H563.32 Q561.72 321.85 561.72 318.05 Q561.72 314.25 563.32 314.25 Z" stroke="#a39584" fill="none" stroke-width="0.85"/>
<text class="m" x="569.66" y="319.95" font-size="5.5" fill="#2cccd0" text-anchor="middle" font-weight="bold">1109</text>
<path d="M579.2 314.25 H591.88 Q593.48 314.25 593.48 318.05 Q593.48 321.85 591.88 321.85 H579.2 Q577.6 321.85 577.6 318.05 Q577.6 314.25 579.2 314.25 Z" stroke="#a39584" fill="none" stroke-width="0.85"/>
<text class="m" x="585.54" y="319.95" font-size="5.5" fill="#2cccd0" text-anchor="middle" font-weight="bold">110a</text>
<path d="M595.08 314.25 H607.76 Q609.36 314.25 609.36 318.05 Q609.36 321.85 607.76 321.85 H595.08 Q593.48 321.85 593.48 318.05 Q593.48 314.25 595.08 314.25 Z" stroke="#a39584" fill="none" stroke-width="0.85"/>
<text class="m" x="601.42" y="319.95" font-size="5.5" fill="#2cccd0" text-anchor="middle" font-weight="bold">110b</text>
<path d="M610.96 314.25 H703.04 Q704.64 314.25 704.64 318.05 Q704.64 321.85 703.04 321.85 H610.96 Q609.36 321.85 609.36 318.05 Q609.36 314.25 610.96 314.25 Z" stroke="#a39584" fill="none" stroke-width="0.85"/>
<text class="m" x="657" y="319.95" font-size="5.5" fill="#2cccd0" text-anchor="middle" font-weight="bold">1111</text>
<path d="M706.24 314.25 H718.92 Q720.52 314.25 720.52 318.05 Q720.52 321.85 718.92 321.85 H706.24 Q704.64 321.85 704.64 318.05 Q704.64 314.25 706.24 314.25 Z" stroke="#a39584" fill="none" stroke-width="0.85"/>
<text class="m" x="712.58" y="319.95" font-size="5.5" fill="#2cccd0" text-anchor="middle" font-weight="bold">1112</text>
<path d="M722.12 314.25 H734.8 Q736.4 314.25 736.4 318.05 Q736.4 321.85 734.8 321.85 H722.12 Q720.52 321.85 720.52 318.05 Q720.52 314.25 722.12 314.25 Z" stroke="#a39584" fill="none" stroke-width="0.85"/>
<text class="m" x="728.46" y="319.95" font-size="5.5" fill="#2cccd0" text-anchor="middle" font-weight="bold">1113</text>
<path d="M738 314.25 H750.68 Q752.28 314.25 752.28 318.05 Q752.28 321.85 750.68 321.85 H738 Q736.4 321.85 736.4 318.05 Q736.4 314.25 738 314.25 Z" stroke="#a39584" fill="none" stroke-width="0.85"/>
<text class="m" x="744.34" y="319.95" font-size="5.5" fill="#2cccd0" text-anchor="middle" font-weight="bold">1114</text>
<path d="M753.88 314.25 H766.56 Q768.16 314.25 768.16 318.05 Q768.16 321.85 766.56 321.85 H753.88 Q752.28 321.85 752.28 318.05 Q752.28 314.25 753.88 314.25 Z" stroke="#a39584" fill="none" stroke-width="0.85"/>
<text class="m" x="760.22" y="319.95" font-size="5.5" fill="#2cccd0" text-anchor="middle" font-weight="bold">1115</text>
<path d="M769.76 314.25 H782.44 Q784.04 314.25 784.04 318.05 Q784.04 321.85 782.44 321.85 H769.76 Q768.16 321.85 768.16 318.05 Q768.16 314.25 769.76 314.25 Z" stroke="#a39584" fill="none" stroke-width="0.85"/>
<text class="m" x="776.1" y="319.95" font-size="5.5" fill="#2cccd0" text-anchor="middle" font-weight="bold">1116</text>
<path d="M785.64 314.25 H798.32 Q799.92 314.25 799.92 318.05 Q799.92 321.85 798.32 321.85 H785.64 Q784.04 321.85 784.04 318.05 Q784.04 314.25 785.64 314.25 Z" stroke="#a39584" fill="none" stroke-width="0.85"/>
<text class="m" x="791.98" y="319.95" font-size="5.5" fill="#2cccd0" text-anchor="middle" font-weight="bold">1117</text>
<path d="M801.52 314.25 H814.2 Q815.8 314.25 815.8 318.05 Q815.8 321.85 814.2 321.85 H801.52 Q799.92 321.85 799.92 318.05 Q799.92 314.25 801.52 314.25 Z" stroke="#a39584" fill="none" stroke-width="0.85"/>
<text class="m" x="806.46" y="319.95" font-size="5.5" fill="#2cccd0" text-anchor="middle" font-weight="bold">11*</text>
<path d="M499.8 323.92 H512.48 Q514.08 323.92 514.08 327.72 Q514.08 331.52 512.48 331.52 H499.8 Q498.2 331.52 498.2 327.72 Q498.2 323.92 499.8 323.92 Z" stroke="#a39584" fill="none" stroke-width="0.85"/>
<text class="m" x="506.89" y="329.62" font-size="5.5" fill="#2cccd0" text-anchor="middle" font-weight="bold">00*</text>
<path d="M515.68 323.92 H544.24 Q545.84 323.92 545.84 327.72 Q545.84 331.52 544.24 331.52 H515.68 Q514.08 331.52 514.08 327.72 Q514.08 323.92 515.68 323.92 Z" stroke="#a39584" fill="none" stroke-width="0.85"/>
<text class="m" x="529.96" y="329.62" font-size="5.5" fill="#2cccd0" text-anchor="middle" font-weight="bold">5381_430e</text>
<path d="M547.44 323.92 H591.88 Q593.48 323.92 593.48 327.72 Q593.48 331.52 591.88 331.52 H547.44 Q545.84 331.52 545.84 327.72 Q545.84 323.92 547.44 323.92 Z" stroke="#a39584" fill="none" stroke-width="0.85"/>
<text class="m" x="569.66" y="329.62" font-size="5.5" fill="#2cccd0" text-anchor="middle" font-weight="bold">4571_dbaa</text>
<path d="M595.08 323.92 H607.76 Q609.36 323.92 609.36 327.72 Q609.36 331.52 607.76 331.52 H595.08 Q593.48 331.52 593.48 327.72 Q593.48 323.92 595.08 323.92 Z" stroke="#a39584" fill="none" stroke-width="0.85"/>
<text class="m" x="601.42" y="329.62" font-size="5.5" fill="#2cccd0" text-anchor="middle" font-weight="bold">0d5*</text>
<path d="M610.96 323.92 H703.04 Q704.64 323.92 704.64 327.72 Q704.64 331.52 703.04 331.52 H610.96 Q609.36 331.52 609.36 327.72 Q609.36 323.92 610.96 323.92 Z" stroke="#a39584" fill="none" stroke-width="0.85"/>
<text class="m" x="657" y="329.62" font-size="5.5" fill="#2cccd0" text-anchor="middle" font-weight="bold">0</text>
<path d="M706.24 323.92 H734.8 Q736.4 323.92 736.4 327.72 Q736.4 331.52 734.8 331.52 H706.24 Q704.64 331.52 704.64 327.72 Q704.64 323.92 706.24 323.92 Z" stroke="#a39584" fill="none" stroke-width="0.85"/>
<text class="m" x="720.52" y="329.62" font-size="5.5" fill="#2cccd0" text-anchor="middle" font-weight="bold">0015_5321</text>
<path d="M738 323.92 H782.44 Q784.04 323.92 784.04 327.72 Q784.04 331.52 782.44 331.52 H738 Q736.4 331.52 736.4 327.72 Q736.4 323.92 738 323.92 Z" stroke="#a39584" fill="none" stroke-width="0.85"/>
<text class="m" x="760.22" y="329.62" font-size="5.5" fill="#2cccd0" text-anchor="middle" font-weight="bold">7054_1b54</text>
<path d="M785.64 323.92 H814.2 Q815.8 323.92 815.8 327.72 Q815.8 331.52 814.2 331.52 H785.64 Q784.04 331.52 784.04 327.72 Q784.04 323.92 785.64 323.92 Z" stroke="#a39584" fill="none" stroke-width="0.85"/>
<text class="m" x="798.52" y="329.62" font-size="5.5" fill="#2cccd0" text-anchor="middle" font-weight="bold">6777_aa*</text>
<path d="M499.8 333.59 H512.48 Q514.08 333.59 514.08 337.39 Q514.08 341.19 512.48 341.19 H499.8 Q498.2 341.19 498.2 337.39 Q498.2 333.59 499.8 333.59 Z" stroke="#a39584" fill="none" stroke-width="0.85"/>
<text class="m" x="506.89" y="339.29" font-size="5.5" fill="#2cccd0" text-anchor="middle" font-weight="bold">00*</text>
<path d="M515.68 333.59 H528.36 Q529.96 333.59 529.96 337.39 Q529.96 341.19 528.36 341.19 H515.68 Q514.08 341.19 514.08 337.39 Q514.08 333.59 515.68 333.59 Z" stroke="#a39584" fill="none" stroke-width="0.85"/>
<text class="m" x="522.02" y="339.29" font-size="5.5" fill="#2cccd0" text-anchor="middle" font-weight="bold">0110</text>
<path d="M531.56 333.59 H544.24 Q545.84 333.59 545.84 337.39 Q545.84 341.19 544.24 341.19 H531.56 Q529.96 341.19 529.96 337.39 Q529.96 333.59 531.56 333.59 Z" stroke="#a39584" fill="none" stroke-width="0.85"/>
<text class="m" x="537.9" y="339.29" font-size="5.5" fill="#2cccd0" text-anchor="middle" font-weight="bold">0112</text>
<path d="M547.44 333.59 H560.12 Q561.72 333.59 561.72 337.39 Q561.72 341.19 560.12 341.19 H547.44 Q545.84 341.19 545.84 337.39 Q545.84 333.59 547.44 333.59 Z" stroke="#a39584" fill="none" stroke-width="0.85"/>
<text class="m" x="553.78" y="339.29" font-size="5.5" fill="#2cccd0" text-anchor="middle" font-weight="bold">0114</text>
<path d="M563.32 333.59 H576 Q577.6 333.59 577.6 337.39 Q577.6 341.19 576 341.19 H563.32 Q561.72 341.19 561.72 337.39 Q561.72 333.59 563.32 333.59 Z" stroke="#a39584" fill="none" stroke-width="0.85"/>
<text class="m" x="569.66" y="339.29" font-size="5.5" fill="#2cccd0" text-anchor="middle" font-weight="bold">0116</text>
<path d="M579.2 333.59 H591.88 Q593.48 333.59 593.48 337.39 Q593.48 341.19 591.88 341.19 H579.2 Q577.6 341.19 577.6 337.39 Q577.6 333.59 579.2 333.59 Z" stroke="#a39584" fill="none" stroke-width="0.85"/>
<text class="m" x="585.54" y="339.29" font-size="5.5" fill="#2cccd0" text-anchor="middle" font-weight="bold">0118</text>
<path d="M595.08 333.59 H607.76 Q609.36 333.59 609.36 337.39 Q609.36 341.19 607.76 341.19 H595.08 Q593.48 341.19 593.48 337.39 Q593.48 333.59 595.08 333.59 Z" stroke="#a39584" fill="none" stroke-width="0.85"/>
<text class="m" x="601.42" y="339.29" font-size="5.5" fill="#2cccd0" text-anchor="middle" font-weight="bold">011a</text>
<path d="M610.96 333.59 H687.16 Q688.76 333.59 688.76 337.39 Q688.76 341.19 687.16 341.19 H610.96 Q609.36 341.19 609.36 337.39 Q609.36 333.59 610.96 333.59 Z" stroke="#a39584" fill="none" stroke-width="0.85"/>
<text class="m" x="649.06" y="339.29" font-size="5.5" fill="#2cccd0" text-anchor="middle" font-weight="bold">2222</text>
<path d="M690.36 333.59 H703.04 Q704.64 333.59 704.64 337.39 Q704.64 341.19 703.04 341.19 H690.36 Q688.76 341.19 688.76 337.39 Q688.76 333.59 690.36 333.59 Z" stroke="#a39584" fill="none" stroke-width="0.85"/>
<text class="m" x="696.7" y="339.29" font-size="5.5" fill="#2cccd0" text-anchor="middle" font-weight="bold">0002</text>
<path d="M706.24 333.59 H718.92 Q720.52 333.59 720.52 337.39 Q720.52 341.19 718.92 341.19 H706.24 Q704.64 341.19 704.64 337.39 Q704.64 333.59 706.24 333.59 Z" stroke="#a39584" fill="none" stroke-width="0.85"/>
<text class="m" x="712.58" y="339.29" font-size="5.5" fill="#2cccd0" text-anchor="middle" font-weight="bold">0004</text>
<path d="M722.12 333.59 H734.8 Q736.4 333.59 736.4 337.39 Q736.4 341.19 734.8 341.19 H722.12 Q720.52 341.19 720.52 337.39 Q720.52 333.59 722.12 333.59 Z" stroke="#a39584" fill="none" stroke-width="0.85"/>
<text class="m" x="728.46" y="339.29" font-size="5.5" fill="#2cccd0" text-anchor="middle" font-weight="bold">0006</text>
<path d="M738 333.59 H750.68 Q752.28 333.59 752.28 337.39 Q752.28 341.19 750.68 341.19 H738 Q736.4 341.19 736.4 337.39 Q736.4 333.59 738 333.59 Z" stroke="#a39584" fill="none" stroke-width="0.85"/>
<text class="m" x="744.34" y="339.29" font-size="5.5" fill="#2cccd0" text-anchor="middle" font-weight="bold">0008</text>
<path d="M753.88 333.59 H766.56 Q768.16 333.59 768.16 337.39 Q768.16 341.19 766.56 341.19 H753.88 Q752.28 341.19 752.28 337.39 Q752.28 333.59 753.88 333.59 Z" stroke="#a39584" fill="none" stroke-width="0.85"/>
<text class="m" x="760.22" y="339.29" font-size="5.5" fill="#2cccd0" text-anchor="middle" font-weight="bold">000a</text>
<path d="M769.76 333.59 H782.44 Q784.04 333.59 784.04 337.39 Q784.04 341.19 782.44 341.19 H769.76 Q768.16 341.19 768.16 337.39 Q768.16 333.59 769.76 333.59 Z" stroke="#a39584" fill="none" stroke-width="0.85"/>
<text class="m" x="776.1" y="339.29" font-size="5.5" fill="#2cccd0" text-anchor="middle" font-weight="bold">000c</text>
<path d="M785.64 333.59 H798.32 Q799.92 333.59 799.92 337.39 Q799.92 341.19 798.32 341.19 H785.64 Q784.04 341.19 784.04 337.39 Q784.04 333.59 785.64 333.59 Z" stroke="#a39584" fill="none" stroke-width="0.85"/>
<text class="m" x="791.98" y="339.29" font-size="5.5" fill="#2cccd0" text-anchor="middle" font-weight="bold">000e</text>
<path d="M801.52 333.59 H814.2 Q815.8 333.59 815.8 337.39 Q815.8 341.19 814.2 341.19 H801.52 Q799.92 341.19 799.92 337.39 Q799.92 333.59 801.52 333.59 Z" stroke="#a39584" fill="none" stroke-width="0.85"/>
<text class="m" x="806.46" y="339.29" font-size="5.5" fill="#2cccd0" text-anchor="middle" font-weight="bold">00*</text>
<path d="M499.8 343.26 H528.36 Q529.96 343.26 529.96 347.06 Q529.96 350.86 528.36 350.86 H499.8 Q498.2 350.86 498.2 347.06 Q498.2 343.26 499.8 343.26 Z" stroke="#a39584" fill="none" stroke-width="0.85"/>
<text class="m" x="514.83" y="348.96" font-size="5.5" fill="#2cccd0" text-anchor="middle" font-weight="bold">cf3a_06*</text>
<path d="M531.56 343.26 H560.12 Q561.72 343.26 561.72 347.06 Q561.72 350.86 560.12 350.86 H531.56 Q529.96 350.86 529.96 347.06 Q529.96 343.26 531.56 343.26 Z" stroke="#a39584" fill="none" stroke-width="0.85"/>
<text class="m" x="545.84" y="348.96" font-size="5.5" fill="#2cccd0" text-anchor="middle" font-weight="bold">1a01_6960</text>
<path d="M563.32 343.26 H607.76 Q609.36 343.26 609.36 347.06 Q609.36 350.86 607.76 350.86 H563.32 Q561.72 350.86 561.72 347.06 Q561.72 343.26 563.32 343.26 Z" stroke="#a39584" fill="none" stroke-width="0.85"/>
<text class="m" x="585.54" y="348.96" font-size="5.5" fill="#2cccd0" text-anchor="middle" font-weight="bold">dcca_2966</text>
<path d="M610.96 343.26 H718.92 Q720.52 343.26 720.52 347.06 Q720.52 350.86 718.92 350.86 H610.96 Q609.36 350.86 609.36 347.06 Q609.36 343.26 610.96 343.26 Z" stroke="#a39584" fill="none" stroke-width="0.85"/>
<text class="m" x="664.94" y="348.96" font-size="5.5" fill="#2cccd0" text-anchor="middle" font-weight="bold">0</text>
<path d="M722.12 343.26 H750.68 Q752.28 343.26 752.28 347.06 Q752.28 350.86 750.68 350.86 H722.12 Q720.52 350.86 720.52 347.06 Q720.52 343.26 722.12 343.26 Z" stroke="#a39584" fill="none" stroke-width="0.85"/>
<text class="m" x="736.4" y="348.96" font-size="5.5" fill="#2cccd0" text-anchor="middle" font-weight="bold">707_300a</text>
<path d="M753.88 343.26 H798.32 Q799.92 343.26 799.92 347.06 Q799.92 350.86 798.32 350.86 H753.88 Q752.28 350.86 752.28 347.06 Q752.28 343.26 753.88 343.26 Z" stroke="#a39584" fill="none" stroke-width="0.85"/>
<text class="m" x="776.1" y="348.96" font-size="5.5" fill="#2cccd0" text-anchor="middle" font-weight="bold">7173_aaa8</text>
<path d="M801.52 343.26 H814.2 Q815.8 343.26 815.8 347.06 Q815.8 350.86 814.2 350.86 H801.52 Q799.92 350.86 799.92 347.06 Q799.92 343.26 801.52 343.26 Z" stroke="#a39584" fill="none" stroke-width="0.85"/>
<text class="m" x="806.46" y="348.96" font-size="5.5" fill="#2cccd0" text-anchor="middle" font-weight="bold">0c*</text>
<path d="M499.8 352.93 H512.48 Q514.08 352.93 514.08 356.73 Q514.08 360.53 512.48 360.53 H499.8 Q498.2 360.53 498.2 356.73 Q498.2 352.93 499.8 352.93 Z" stroke="#a39584" fill="none" stroke-width="0.85"/>
<text class="m" x="506.89" y="358.63" font-size="5.5" fill="#2cccd0" text-anchor="middle" font-weight="bold">00*</text>
<path d="M515.68 352.93 H528.36 Q529.96 352.93 529.96 356.73 Q529.96 360.53 528.36 360.53 H515.68 Q514.08 360.53 514.08 356.73 Q514.08 352.93 515.68 352.93 Z" stroke="#a39584" fill="none" stroke-width="0.85"/>
<text class="m" x="522.02" y="358.63" font-size="5.5" fill="#2cccd0" text-anchor="middle" font-weight="bold">0300</text>
<path d="M531.56 352.93 H544.24 Q545.84 352.93 545.84 356.73 Q545.84 360.53 544.24 360.53 H531.56 Q529.96 360.53 529.96 356.73 Q529.96 352.93 531.56 352.93 Z" stroke="#a39584" fill="none" stroke-width="0.85"/>
<text class="m" x="537.9" y="358.63" font-size="5.5" fill="#2cccd0" text-anchor="middle" font-weight="bold">0303</text>
<path d="M547.44 352.93 H560.12 Q561.72 352.93 561.72 356.73 Q561.72 360.53 560.12 360.53 H547.44 Q545.84 360.53 545.84 356.73 Q545.84 352.93 547.44 352.93 Z" stroke="#a39584" fill="none" stroke-width="0.85"/>
<text class="m" x="553.78" y="358.63" font-size="5.5" fill="#2cccd0" text-anchor="middle" font-weight="bold">0306</text>
<path d="M563.32 352.93 H576 Q577.6 352.93 577.6 356.73 Q577.6 360.53 576 360.53 H563.32 Q561.72 360.53 561.72 356.73 Q561.72 352.93 563.32 352.93 Z" stroke="#a39584" fill="none" stroke-width="0.85"/>
<text class="m" x="569.66" y="358.63" font-size="5.5" fill="#2cccd0" text-anchor="middle" font-weight="bold">0309</text>
<path d="M579.2 352.93 H591.88 Q593.48 352.93 593.48 356.73 Q593.48 360.53 591.88 360.53 H579.2 Q577.6 360.53 577.6 356.73 Q577.6 352.93 579.2 352.93 Z" stroke="#a39584" fill="none" stroke-width="0.85"/>
<text class="m" x="585.54" y="358.63" font-size="5.5" fill="#2cccd0" text-anchor="middle" font-weight="bold">030c</text>
<path d="M595.08 352.93 H607.76 Q609.36 352.93 609.36 356.73 Q609.36 360.53 607.76 360.53 H595.08 Q593.48 360.53 593.48 356.73 Q593.48 352.93 595.08 352.93 Z" stroke="#a39584" fill="none" stroke-width="0.85"/>
<text class="m" x="601.42" y="358.63" font-size="5.5" fill="#2cccd0" text-anchor="middle" font-weight="bold">030f</text>
<path d="M610.96 352.93 H718.92 Q720.52 352.93 720.52 356.73 Q720.52 360.53 718.92 360.53 H610.96 Q609.36 360.53 609.36 356.73 Q609.36 352.93 610.96 352.93 Z" stroke="#a39584" fill="none" stroke-width="0.85"/>
<text class="m" x="664.94" y="358.63" font-size="5.5" fill="#2cccd0" text-anchor="middle" font-weight="bold">3333</text>
<path d="M722.12 352.93 H734.8 Q736.4 352.93 736.4 356.73 Q736.4 360.53 734.8 360.53 H722.12 Q720.52 360.53 720.52 356.73 Q720.52 352.93 722.12 352.93 Z" stroke="#a39584" fill="none" stroke-width="0.85"/>
<text class="m" x="728.46" y="358.63" font-size="5.5" fill="#2cccd0" text-anchor="middle" font-weight="bold">0003</text>
<path d="M738 352.93 H750.68 Q752.28 352.93 752.28 356.73 Q752.28 360.53 750.68 360.53 H738 Q736.4 360.53 736.4 356.73 Q736.4 352.93 738 352.93 Z" stroke="#a39584" fill="none" stroke-width="0.85"/>
<text class="m" x="744.34" y="358.63" font-size="5.5" fill="#2cccd0" text-anchor="middle" font-weight="bold">0006</text>
<path d="M753.88 352.93 H766.56 Q768.16 352.93 768.16 356.73 Q768.16 360.53 766.56 360.53 H753.88 Q752.28 360.53 752.28 356.73 Q752.28 352.93 753.88 352.93 Z" stroke="#a39584" fill="none" stroke-width="0.85"/>
<text class="m" x="760.22" y="358.63" font-size="5.5" fill="#2cccd0" text-anchor="middle" font-weight="bold">0009</text>
<path d="M769.76 352.93 H782.44 Q784.04 352.93 784.04 356.73 Q784.04 360.53 782.44 360.53 H769.76 Q768.16 360.53 768.16 356.73 Q768.16 352.93 769.76 352.93 Z" stroke="#a39584" fill="none" stroke-width="0.85"/>
<text class="m" x="776.1" y="358.63" font-size="5.5" fill="#2cccd0" text-anchor="middle" font-weight="bold">000c</text>
<path d="M785.64 352.93 H798.32 Q799.92 352.93 799.92 356.73 Q799.92 360.53 798.32 360.53 H785.64 Q784.04 360.53 784.04 356.73 Q784.04 352.93 785.64 352.93 Z" stroke="#a39584" fill="none" stroke-width="0.85"/>
<text class="m" x="791.98" y="358.63" font-size="5.5" fill="#2cccd0" text-anchor="middle" font-weight="bold">000f</text>
<path d="M801.52 352.93 H814.2 Q815.8 352.93 815.8 356.73 Q815.8 360.53 814.2 360.53 H801.52 Q799.92 360.53 799.92 356.73 Q799.92 352.93 801.52 352.93 Z" stroke="#a39584" fill="none" stroke-width="0.85"/>
<text class="m" x="806.46" y="358.63" font-size="5.5" fill="#2cccd0" text-anchor="middle" font-weight="bold">00*</text>
<path d="M499.8 362.6 H512.48 Q514.08 362.6 514.08 366.4 Q514.08 370.2 512.48 370.2 H499.8 Q498.2 370.2 498.2 366.4 Q498.2 362.6 499.8 362.6 Z" stroke="#a39584" fill="none" stroke-width="0.85"/>
<text class="m" x="506.89" y="368.3" font-size="5.5" fill="#2cccd0" text-anchor="middle" font-weight="bold">44*</text>
<path d="M515.68 362.6 H528.36 Q529.96 362.6 529.96 366.4 Q529.96 370.2 528.36 370.2 H515.68 Q514.08 370.2 514.08 366.4 Q514.08 362.6 515.68 362.6 Z" stroke="#a39584" fill="none" stroke-width="0.85"/>
<text class="m" x="522.02" y="368.3" font-size="5.5" fill="#2cccd0" text-anchor="middle" font-weight="bold">4420</text>
<path d="M531.56 362.6 H544.24 Q545.84 362.6 545.84 366.4 Q545.84 370.2 544.24 370.2 H531.56 Q529.96 370.2 529.96 366.4 Q529.96 362.6 531.56 362.6 Z" stroke="#a39584" fill="none" stroke-width="0.85"/>
<text class="m" x="537.9" y="368.3" font-size="5.5" fill="#2cccd0" text-anchor="middle" font-weight="bold">4424</text>
<path d="M547.44 362.6 H560.12 Q561.72 362.6 561.72 366.4 Q561.72 370.2 560.12 370.2 H547.44 Q545.84 370.2 545.84 366.4 Q545.84 362.6 547.44 362.6 Z" stroke="#a39584" fill="none" stroke-width="0.85"/>
<text class="m" x="553.78" y="368.3" font-size="5.5" fill="#2cccd0" text-anchor="middle" font-weight="bold">4428</text>
<path d="M563.32 362.6 H576 Q577.6 362.6 577.6 366.4 Q577.6 370.2 576 370.2 H563.32 Q561.72 370.2 561.72 366.4 Q561.72 362.6 563.32 362.6 Z" stroke="#a39584" fill="none" stroke-width="0.85"/>
<text class="m" x="569.66" y="368.3" font-size="5.5" fill="#2cccd0" text-anchor="middle" font-weight="bold">442c</text>
<path d="M579.2 362.6 H591.88 Q593.48 362.6 593.48 366.4 Q593.48 370.2 591.88 370.2 H579.2 Q577.6 370.2 577.6 366.4 Q577.6 362.6 579.2 362.6 Z" stroke="#a39584" fill="none" stroke-width="0.85"/>
<text class="m" x="585.54" y="368.3" font-size="5.5" fill="#2cccd0" text-anchor="middle" font-weight="bold">4430</text>
<path d="M595.08 362.6 H607.76 Q609.36 362.6 609.36 366.4 Q609.36 370.2 607.76 370.2 H595.08 Q593.48 370.2 593.48 366.4 Q593.48 362.6 595.08 362.6 Z" stroke="#a39584" fill="none" stroke-width="0.85"/>
<text class="m" x="601.42" y="368.3" font-size="5.5" fill="#2cccd0" text-anchor="middle" font-weight="bold">4434</text>
<path d="M610.96 362.6 H734.8 Q736.4 362.6 736.4 366.4 Q736.4 370.2 734.8 370.2 H610.96 Q609.36 370.2 609.36 366.4 Q609.36 362.6 610.96 362.6 Z" stroke="#a39584" fill="none" stroke-width="0.85"/>
<text class="m" x="672.88" y="368.3" font-size="5.5" fill="#2cccd0" text-anchor="middle" font-weight="bold">4444</text>
<path d="M738 362.6 H750.68 Q752.28 362.6 752.28 366.4 Q752.28 370.2 750.68 370.2 H738 Q736.4 370.2 736.4 366.4 Q736.4 362.6 738 362.6 Z" stroke="#a39584" fill="none" stroke-width="0.85"/>
<text class="m" x="744.34" y="368.3" font-size="5.5" fill="#2cccd0" text-anchor="middle" font-weight="bold">4447</text>
<path d="M753.88 362.6 H766.56 Q768.16 362.6 768.16 366.4 Q768.16 370.2 766.56 370.2 H753.88 Q752.28 370.2 752.28 366.4 Q752.28 362.6 753.88 362.6 Z" stroke="#a39584" fill="none" stroke-width="0.85"/>
<text class="m" x="760.22" y="368.3" font-size="5.5" fill="#2cccd0" text-anchor="middle" font-weight="bold">444b</text>
<path d="M769.76 362.6 H782.44 Q784.04 362.6 784.04 366.4 Q784.04 370.2 782.44 370.2 H769.76 Q768.16 370.2 768.16 366.4 Q768.16 362.6 769.76 362.6 Z" stroke="#a39584" fill="none" stroke-width="0.85"/>
<text class="m" x="776.1" y="368.3" font-size="5.5" fill="#2cccd0" text-anchor="middle" font-weight="bold">444f</text>
<path d="M785.64 362.6 H798.32 Q799.92 362.6 799.92 366.4 Q799.92 370.2 798.32 370.2 H785.64 Q784.04 370.2 784.04 366.4 Q784.04 362.6 785.64 362.6 Z" stroke="#a39584" fill="none" stroke-width="0.85"/>
<text class="m" x="791.98" y="368.3" font-size="5.5" fill="#2cccd0" text-anchor="middle" font-weight="bold">4453</text>
<path d="M801.52 362.6 H814.2 Q815.8 362.6 815.8 366.4 Q815.8 370.2 814.2 370.2 H801.52 Q799.92 370.2 799.92 366.4 Q799.92 362.6 801.52 362.6 Z" stroke="#a39584" fill="none" stroke-width="0.85"/>
<text class="m" x="806.46" y="368.3" font-size="5.5" fill="#2cccd0" text-anchor="middle" font-weight="bold">44*</text>
<path d="M499.8 372.27 H512.48 Q514.08 372.27 514.08 376.07 Q514.08 379.87 512.48 379.87 H499.8 Q498.2 379.87 498.2 376.07 Q498.2 372.27 499.8 372.27 Z" stroke="#a39584" fill="none" stroke-width="0.85"/>
<text class="m" x="506.89" y="377.97" font-size="5.5" fill="#2cccd0" text-anchor="middle" font-weight="bold">46*</text>
<path d="M515.68 372.27 H544.24 Q545.84 372.27 545.84 376.07 Q545.84 379.87 544.24 379.87 H515.68 Q514.08 379.87 514.08 376.07 Q514.08 372.27 515.68 372.27 Z" stroke="#a39584" fill="none" stroke-width="0.85"/>
<text class="m" x="529.96" y="377.97" font-size="5.5" fill="#2cccd0" text-anchor="middle" font-weight="bold">bc5b_2a70</text>
<path d="M547.44 372.27 H576 Q577.6 372.27 577.6 376.07 Q577.6 379.87 576 379.87 H547.44 Q545.84 379.87 545.84 376.07 Q545.84 372.27 547.44 372.27 Z" stroke="#a39584" fill="none" stroke-width="0.85"/>
<text class="m" x="561.72" y="377.97" font-size="5.5" fill="#2cccd0" text-anchor="middle" font-weight="bold">0a04_bbd0</text>
<path d="M579.2 372.27 H607.76 Q609.36 372.27 609.36 376.07 Q609.36 379.87 607.76 379.87 H579.2 Q577.6 379.87 577.6 376.07 Q577.6 372.27 579.2 372.27 Z" stroke="#a39584" fill="none" stroke-width="0.85"/>
<text class="m" x="593.48" y="377.97" font-size="5.5" fill="#2cccd0" text-anchor="middle" font-weight="bold">b281_c10*</text>
<path d="M610.96 372.27 H734.8 Q736.4 372.27 736.4 376.07 Q736.4 379.87 734.8 379.87 H610.96 Q609.36 379.87 609.36 376.07 Q609.36 372.27 610.96 372.27 Z" stroke="#a39584" fill="none" stroke-width="0.85"/>
<text class="m" x="672.88" y="377.97" font-size="5.5" fill="#2cccd0" text-anchor="middle" font-weight="bold">0</text>
<path d="M738 372.27 H766.56 Q768.16 372.27 768.16 376.07 Q768.16 379.87 766.56 379.87 H738 Q736.4 379.87 736.4 376.07 Q736.4 372.27 738 372.27 Z" stroke="#a39584" fill="none" stroke-width="0.85"/>
<text class="m" x="752.28" y="377.97" font-size="5.5" fill="#2cccd0" text-anchor="middle" font-weight="bold">0203_1b24</text>
<path d="M769.76 372.27 H798.32 Q799.92 372.27 799.92 376.07 Q799.92 379.87 798.32 379.87 H769.76 Q768.16 379.87 768.16 376.07 Q768.16 372.27 769.76 372.27 Z" stroke="#a39584" fill="none" stroke-width="0.85"/>
<text class="m" x="784.04" y="377.97" font-size="5.5" fill="#2cccd0" text-anchor="middle" font-weight="bold">c3b4_c2ca</text>
<path d="M801.52 372.27 H814.2 Q815.8 372.27 815.8 376.07 Q815.8 379.87 814.2 379.87 H801.52 Q799.92 379.87 799.92 376.07 Q799.92 372.27 801.52 372.27 Z" stroke="#a39584" fill="none" stroke-width="0.85"/>
<text class="m" x="806.46" y="377.97" font-size="5.5" fill="#2cccd0" text-anchor="middle" font-weight="bold">b5*</text>
<path d="M499.8 381.94 H528.36 Q529.96 381.94 529.96 385.74 Q529.96 389.54 528.36 389.54 H499.8 Q498.2 389.54 498.2 385.74 Q498.2 381.94 499.8 381.94 Z" stroke="#a39584" fill="none" stroke-width="0.85"/>
<text class="m" x="514.83" y="387.64" font-size="5.5" fill="#2cccd0" text-anchor="middle" font-weight="bold">2b98_de*</text>
<path d="M531.56 381.94 H560.12 Q561.72 381.94 561.72 385.74 Q561.72 389.54 560.12 389.54 H531.56 Q529.96 389.54 529.96 385.74 Q529.96 381.94 531.56 381.94 Z" stroke="#a39584" fill="none" stroke-width="0.85"/>
<text class="m" x="545.84" y="387.64" font-size="5.5" fill="#2cccd0" text-anchor="middle" font-weight="bold">5e6b_1b80</text>
<path d="M563.32 381.94 H591.88 Q593.48 381.94 593.48 385.74 Q593.48 389.54 591.88 389.54 H563.32 Q561.72 389.54 561.72 385.74 Q561.72 381.94 563.32 381.94 Z" stroke="#a39584" fill="none" stroke-width="0.85"/>
<text class="m" x="577.6" y="387.64" font-size="5.5" fill="#2cccd0" text-anchor="middle" font-weight="bold">833a_227*</text>
<path d="M595.08 381.94 H607.76 Q609.36 381.94 609.36 385.74 Q609.36 389.54 607.76 389.54 H595.08 Q593.48 389.54 593.48 385.74 Q593.48 381.94 595.08 381.94 Z" stroke="#a39584" fill="none" stroke-width="0.85"/>
<text class="m" x="601.42" y="387.64" font-size="5.5" fill="#2cccd0" text-anchor="middle" font-weight="bold">d42*</text>
<path d="M610.96 381.94 H782.44 Q784.04 381.94 784.04 385.74 Q784.04 389.54 782.44 389.54 H610.96 Q609.36 389.54 609.36 385.74 Q609.36 381.94 610.96 381.94 Z" stroke="#a39584" fill="none" stroke-width="0.85"/>
<text class="m" x="696.7" y="387.64" font-size="5.5" fill="#2cccd0" text-anchor="middle" font-weight="bold">0</text>
<path d="M785.64 381.94 H814.2 Q815.8 381.94 815.8 385.74 Q815.8 389.54 814.2 389.54 H785.64 Q784.04 389.54 784.04 385.74 Q784.04 381.94 785.64 381.94 Z" stroke="#a39584" fill="none" stroke-width="0.85"/>
<text class="m" x="798.52" y="387.64" font-size="5.5" fill="#2cccd0" text-anchor="middle" font-weight="bold">07ea_5a*</text>
<line x1="657" y1="161.8" x2="657" y2="393.4" stroke="#c81c1c" stroke-width="0.9" stroke-dasharray="1.7 1.5"/>
<line x1="657" y1="163.4" x2="657" y2="393.4" stroke="#20a020" stroke-width="0.9" stroke-dasharray="0.9 5.5"/>
<line x1="657" y1="153.3" x2="657" y2="161.8" stroke="#20d0d0" stroke-width="0.8"/>
<text class="s" x="657" y="168.2" font-size="5.6" fill="#e01c1c" text-anchor="middle" textLength="22" lengthAdjust="spacingAndGlyphs">Trigger</text>
<rect x="499.7" y="393.4" width="313.3" height="7.6" fill="#8a8a8a"/>
<line x1="503.2" y1="393.8" x2="503.2" y2="401" stroke="#e0d820" stroke-width="0.9"/>
<line x1="518.32" y1="398.6" x2="518.32" y2="401" stroke="#e0d820" stroke-width="0.8"/>
<line x1="533.44" y1="398.6" x2="533.44" y2="401" stroke="#e0d820" stroke-width="0.8"/>
<line x1="548.56" y1="398.6" x2="548.56" y2="401" stroke="#e0d820" stroke-width="0.8"/>
<line x1="563.68" y1="398.6" x2="563.68" y2="401" stroke="#e0d820" stroke-width="0.8"/>
<line x1="578.8" y1="393.8" x2="578.8" y2="401" stroke="#e0d820" stroke-width="0.9"/>
<line x1="593.92" y1="398.6" x2="593.92" y2="401" stroke="#e0d820" stroke-width="0.8"/>
<line x1="609.04" y1="398.6" x2="609.04" y2="401" stroke="#e0d820" stroke-width="0.8"/>
<line x1="624.16" y1="398.6" x2="624.16" y2="401" stroke="#e0d820" stroke-width="0.8"/>
<line x1="639.28" y1="398.6" x2="639.28" y2="401" stroke="#e0d820" stroke-width="0.8"/>
<line x1="654.4" y1="393.8" x2="654.4" y2="401" stroke="#e0d820" stroke-width="0.9"/>
<line x1="669.52" y1="398.6" x2="669.52" y2="401" stroke="#e0d820" stroke-width="0.8"/>
<line x1="684.64" y1="398.6" x2="684.64" y2="401" stroke="#e0d820" stroke-width="0.8"/>
<line x1="699.76" y1="398.6" x2="699.76" y2="401" stroke="#e0d820" stroke-width="0.8"/>
<line x1="714.88" y1="398.6" x2="714.88" y2="401" stroke="#e0d820" stroke-width="0.8"/>
<line x1="730" y1="393.8" x2="730" y2="401" stroke="#e0d820" stroke-width="0.9"/>
<line x1="745.12" y1="398.6" x2="745.12" y2="401" stroke="#e0d820" stroke-width="0.8"/>
<line x1="760.24" y1="398.6" x2="760.24" y2="401" stroke="#e0d820" stroke-width="0.8"/>
<line x1="775.36" y1="398.6" x2="775.36" y2="401" stroke="#e0d820" stroke-width="0.8"/>
<line x1="790.48" y1="398.6" x2="790.48" y2="401" stroke="#e0d820" stroke-width="0.8"/>
<line x1="805.6" y1="393.8" x2="805.6" y2="401" stroke="#e0d820" stroke-width="0.9"/>
<text class="s" x="504.6" y="399" font-size="5.6" fill="#e0d820" textLength="3" lengthAdjust="spacingAndGlyphs">0</text>
<text class="s" x="580.2" y="399" font-size="5.6" fill="#e0d820" textLength="28.6" lengthAdjust="spacingAndGlyphs">1,000,000</text>
<text class="s" x="655.8" y="399" font-size="5.6" fill="#e0d820" textLength="28.6" lengthAdjust="spacingAndGlyphs">2,000,000</text>
<text class="s" x="731.4" y="399" font-size="5.6" fill="#e0d820" textLength="28.6" lengthAdjust="spacingAndGlyphs">3,000,000</text>
<rect x="806" y="393.6" width="2" height="7.4" fill="#2a30e0"/>
</g>
<path d="M777 394.6 v8.4 l2 -1.8 1.6 3 1.4 -0.7 -1.6 -2.9 h2.9 Z" stroke="#f4f4f4" fill="#0a0a0a" stroke-width="0.5"/>
<rect x="357.2" y="401" width="463.7" height="7.4" fill="#e9e9e9"/>
<line x1="357.2" y1="401.2" x2="820.9" y2="401.2" stroke="#b4b4b4" stroke-width="0.5"/>
<rect x="358.4" y="401.6" width="99.4" height="6.4" fill="#ececec"/>
<rect x="358.8" y="402" width="5.2" height="5.6" fill="#f6f6f6" stroke="#8c8c8c" stroke-width="0.5"/>
<rect x="452.2" y="402" width="5.2" height="5.6" fill="#f6f6f6" stroke="#8c8c8c" stroke-width="0.5"/>
<path d="M360.2 404.8 l2.2 -1.6 v3.2 Z" stroke="none" fill="#555" stroke-width="1"/>
<path d="M456 404.8 l-2.2 -1.6 v3.2 Z" stroke="none" fill="#555" stroke-width="1"/>
<rect x="362" y="402.4" width="18" height="5" fill="#a8a8a8"/>
<rect x="466.8" y="401.6" width="30.6" height="6.4" fill="#ececec"/>
<rect x="467.2" y="402" width="5.2" height="5.6" fill="#f6f6f6" stroke="#8c8c8c" stroke-width="0.5"/>
<rect x="491.8" y="402" width="5.2" height="5.6" fill="#f6f6f6" stroke="#8c8c8c" stroke-width="0.5"/>
<path d="M468.6 404.8 l2.2 -1.6 v3.2 Z" stroke="none" fill="#555" stroke-width="1"/>
<path d="M495.6 404.8 l-2.2 -1.6 v3.2 Z" stroke="none" fill="#555" stroke-width="1"/>
<rect x="499.7" y="401.6" width="313.3" height="6.4" fill="#ececec"/>
<rect x="500.1" y="402" width="5.2" height="5.6" fill="#f6f6f6" stroke="#8c8c8c" stroke-width="0.5"/>
<rect x="807.4" y="402" width="5.2" height="5.6" fill="#f6f6f6" stroke="#8c8c8c" stroke-width="0.5"/>
<path d="M501.5 404.8 l2.2 -1.6 v3.2 Z" stroke="none" fill="#555" stroke-width="1"/>
<path d="M811.2 404.8 l-2.2 -1.6 v3.2 Z" stroke="none" fill="#555" stroke-width="1"/>
<rect x="505.8" y="402.2" width="301.2" height="5.4" fill="#9a9a9a"/>
<rect x="505.8" y="402.2" width="27.6" height="5.4" fill="#dcdcdc" stroke="#8c8c8c" stroke-width="0.4"/>
<rect x="814.6" y="401.6" width="6" height="6" fill="#ff0000"/>
<rect x="357.2" y="408.4" width="463.7" height="10.5" fill="url(#gstat)"/>
<line x1="357.2" y1="408.6" x2="820.9" y2="408.6" stroke="#f6f9fd" stroke-width="0.7"/>
<line x1="813.4" y1="410" x2="813.4" y2="418" stroke="#b9c4d4" stroke-width="0.6"/>
<line x1="356.4" y1="418.8" x2="821.6" y2="418.8" stroke="#5c6a78" stroke-width="0.8"/>
</g>
</svg>
</body>
</html>
